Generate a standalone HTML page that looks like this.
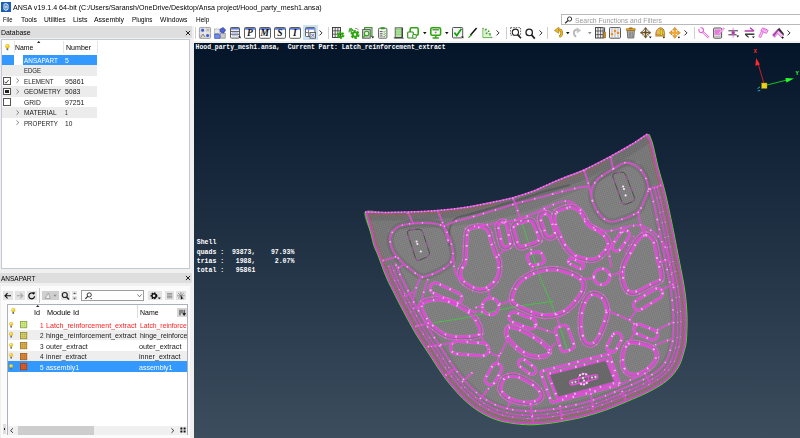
<!DOCTYPE html>
<html><head><meta charset="utf-8"><title>ANSA</title>
<style>
html,body{margin:0;padding:0;}
body{width:800px;height:438px;overflow:hidden;position:relative;background:#f0f0f0;font-family:"Liberation Sans",sans-serif;}
.r{position:absolute;display:block;}
.t{position:absolute;white-space:pre;line-height:normal;transform-origin:0 0;}
svg{overflow:visible}
</style></head><body>
<div class="r" style="left:0px;top:0px;width:800px;height:26px;background:#fff;"></div>
<svg class="r" style="left:1px;top:1.5px" width="10" height="10" viewBox="0 0 10 10"><rect width="10" height="10" fill="#1a5fb4"/><path d="M3 2.2 L5 1.6 L7 2.6 L7 7.2 L5 8.4 L3 7.4Z" fill="none" stroke="#fff" stroke-width="0.9"/><path d="M5 2.5V7.5M3.6 5H6.4" stroke="#fff" stroke-width="0.8"/></svg>
<span class="t" style="left:12.80px;top:2.83px;font-size:7.7px;color:#000;transform:scaleX(0.9215);">ANSA v19.1.4 64-bit (C:/Users/Saransh/OneDrive/Desktop/Ansa project/Hood_party_mesh1.ansa)</span>
<span class="t" style="left:3.40px;top:15.04px;font-size:7.8px;color:#000;transform:scaleX(0.7479);">File</span>
<span class="t" style="left:21.00px;top:15.04px;font-size:7.8px;color:#000;transform:scaleX(0.8787);">Tools</span>
<span class="t" style="left:44.00px;top:15.04px;font-size:7.8px;color:#000;transform:scaleX(0.8553);">Utilities</span>
<span class="t" style="left:72.50px;top:15.04px;font-size:7.8px;color:#000;transform:scaleX(0.9041);">Lists</span>
<span class="t" style="left:94.00px;top:15.04px;font-size:7.8px;color:#000;transform:scaleX(0.8873);">Assembly</span>
<span class="t" style="left:132.00px;top:15.04px;font-size:7.8px;color:#000;transform:scaleX(0.8013);">Plugins</span>
<span class="t" style="left:160.00px;top:15.04px;font-size:7.8px;color:#000;transform:scaleX(0.8691);">Windows</span>
<span class="t" style="left:195.50px;top:15.04px;font-size:7.8px;color:#000;transform:scaleX(0.8291);">Help</span>
<div class="r" style="left:561px;top:14px;width:239px;height:10.600000000000001px;background:#fff;border:1px solid #b9b9b9;border-right:none;box-sizing:border-box;"></div>
<svg class="r" style="left:564px;top:15.5px" width="9" height="8" viewBox="0 0 9 8"><circle cx="5.6" cy="3" r="2.1" fill="none" stroke="#333" stroke-width="1"/><path d="M4 4.6L1.2 7.2" stroke="#333" stroke-width="1.3"/></svg>
<span class="t" style="left:575.00px;top:15.72px;font-size:7.6px;color:#9a9a9a;transform:scaleX(0.8994);">Search Functions and Filters</span>
<div class="r" style="left:0px;top:26px;width:800px;height:14.5px;background:#fff;"></div>
<div class="r" style="left:0px;top:40.5px;width:800px;height:2.5px;background:#f0f0f0;"></div>
<div class="r" style="left:0px;top:26px;width:193.5px;height:412px;background:#f0f0f0;"></div>
<div class="r" style="left:0px;top:25.5px;width:192px;height:12.100000000000001px;background:#dedede;"></div>
<span class="t" style="left:1.30px;top:27.72px;font-size:7.6px;color:#000;transform:scaleX(0.9129);">Database</span>
<svg class="r" style="left:184.5px;top:29.5px" width="6" height="6" viewBox="0 0 6 6"><path d="M0.9 0.9L5.1 5.1M5.1 0.9L0.9 5.1" stroke="#222" stroke-width="1"/></svg>
<div class="r" style="left:1.2px;top:38.8px;width:188.60000000000002px;height:229.8px;background:#fff;border:1px solid #c3c9d2;box-sizing:border-box;"></div>
<svg class="r" style="left:5.10px;top:43.64px" width="4.80" height="6.72" viewBox="0 0 6 8.4"><circle cx="3" cy="2.8" r="2.5" fill="#f7d21c" stroke="#c79a10" stroke-width="0.5"/><circle cx="2.3" cy="2" r="0.9" fill="#fff6b0"/><rect x="1.9" y="5.2" width="2.2" height="2.6" fill="#6b6b6b"/></svg>
<span class="t" style="left:15.40px;top:43.02px;font-size:7.6px;color:#000;transform:scaleX(0.9076);">Name</span>
<span class="t" style="left:65.70px;top:43.02px;font-size:7.6px;color:#000;transform:scaleX(0.9285);">Number</span>
<svg class="r" style="left:36.5px;top:40.6px" width="3.4" height="2" viewBox="0 0 3.4 2"><path d="M0 2L1.7 0L3.4 2Z" fill="#222"/></svg>
<div class="r" style="left:14px;top:41px;width:0.5px;height:12px;background:#e5e5e5;"></div>
<div class="r" style="left:63px;top:41px;width:0.5px;height:12px;background:#e5e5e5;"></div>
<div class="r" style="left:96.7px;top:41px;width:0.5px;height:12px;background:#e5e5e5;"></div>
<div class="r" style="left:1.7px;top:54.5px;width:95.1px;height:10.200000000000003px;background:#3399ff;"></div>
<div class="r" style="left:13.8px;top:54.5px;width:9.599999999999998px;height:10.200000000000003px;background:#fff;"></div>
<span class="t" style="left:24.40px;top:55.72px;font-size:7.6px;color:#fff;transform:scaleX(0.8419);">ANSAPART</span>
<span class="t" style="left:64.80px;top:55.72px;font-size:7.6px;color:#fff;transform:scaleX(0.8990);">5</span>
<div class="r" style="left:1.7px;top:65.0px;width:95.1px;height:10.5px;background:#ececec;"></div>
<span class="t" style="left:24.40px;top:66.22px;font-size:7.6px;color:#1a1a1a;transform:scaleX(0.7939);">EDGE</span>
<span class="t" style="left:24.40px;top:76.72px;font-size:7.6px;color:#1a1a1a;transform:scaleX(0.8246);">ELEMENT</span>
<span class="t" style="left:64.80px;top:76.72px;font-size:7.6px;color:#1a1a1a;transform:scaleX(0.9179);">95861</span>
<svg class="r" style="left:16.2px;top:78.15px" width="3.4" height="5.2" viewBox="0 0 3.4 5.2"><path d="M0.5 0.4L2.8 2.6L0.5 4.8" fill="none" stroke="#666" stroke-width="0.8"/></svg>
<div class="r" style="left:3.1px;top:77.35px;width:7.5px;height:7.5px;background:#fff;border:0.8px solid #555;box-sizing:border-box;"></div>
<svg class="r" style="left:3.25px;top:77.55px" width="7.2" height="7.2" viewBox="0 0 7.2 7.2"><path d="M1.6 3.7L3 5.2L5.7 1.9" fill="none" stroke="#333" stroke-width="0.9"/></svg>
<div class="r" style="left:1.7px;top:86.0px;width:95.1px;height:10.5px;background:#ececec;"></div>
<span class="t" style="left:24.40px;top:87.22px;font-size:7.6px;color:#1a1a1a;transform:scaleX(0.8511);">GEOMETRY</span>
<span class="t" style="left:64.80px;top:87.22px;font-size:7.6px;color:#1a1a1a;transform:scaleX(0.9167);">5083</span>
<svg class="r" style="left:16.2px;top:88.65px" width="3.4" height="5.2" viewBox="0 0 3.4 5.2"><path d="M0.5 0.4L2.8 2.6L0.5 4.8" fill="none" stroke="#666" stroke-width="0.8"/></svg>
<div class="r" style="left:3.1px;top:87.85px;width:7.5px;height:7.5px;background:#fff;border:0.8px solid #555;box-sizing:border-box;"></div>
<div class="r" style="left:5.1px;top:89.85px;width:3.5px;height:3.5px;background:#222;"></div>
<span class="t" style="left:24.40px;top:97.72px;font-size:7.6px;color:#1a1a1a;transform:scaleX(0.8842);">GRID</span>
<span class="t" style="left:64.80px;top:97.72px;font-size:7.6px;color:#1a1a1a;transform:scaleX(0.9179);">97251</span>
<div class="r" style="left:3.1px;top:98.35px;width:7.5px;height:7.5px;background:#fff;border:0.8px solid #555;box-sizing:border-box;"></div>
<div class="r" style="left:1.7px;top:107.0px;width:95.1px;height:10.5px;background:#ececec;"></div>
<span class="t" style="left:24.40px;top:108.22px;font-size:7.6px;color:#1a1a1a;transform:scaleX(0.8706);">MATERIAL</span>
<span class="t" style="left:65.30px;top:108.22px;font-size:7.6px;color:#1a1a1a;transform:scaleX(0.6388);">1</span>
<svg class="r" style="left:16.2px;top:109.65px" width="3.4" height="5.2" viewBox="0 0 3.4 5.2"><path d="M0.5 0.4L2.8 2.6L0.5 4.8" fill="none" stroke="#666" stroke-width="0.8"/></svg>
<span class="t" style="left:24.40px;top:118.72px;font-size:7.6px;color:#1a1a1a;transform:scaleX(0.8135);">PROPERTY</span>
<span class="t" style="left:65.30px;top:118.72px;font-size:7.6px;color:#1a1a1a;transform:scaleX(0.8635);">10</span>
<svg class="r" style="left:16.2px;top:120.15px" width="3.4" height="5.2" viewBox="0 0 3.4 5.2"><path d="M0.5 0.4L2.8 2.6L0.5 4.8" fill="none" stroke="#666" stroke-width="0.8"/></svg>
<div class="r" style="left:0px;top:272.5px;width:192px;height:10.899999999999977px;background:#dedede;"></div>
<span class="t" style="left:1.20px;top:273.92px;font-size:7.6px;color:#000;transform:scaleX(0.8543);">ANSAPART</span>
<svg class="r" style="left:184.5px;top:275.3px" width="6" height="6" viewBox="0 0 6 6"><path d="M0.9 0.9L5.1 5.1M5.1 0.9L0.9 5.1" stroke="#222" stroke-width="1"/></svg>
<div class="r" style="left:1.2px;top:285.6px;width:188.60000000000002px;height:152.39999999999998px;background:#fbfbfb;"></div>
<div class="r" style="left:3px;top:290.6px;width:9.8px;height:9.599999999999966px;background:#e3e3e3;"></div>
<div class="r" style="left:15.4px;top:290.6px;width:9.799999999999999px;height:9.599999999999966px;background:#e3e3e3;"></div>
<div class="r" style="left:27.2px;top:290.6px;width:9.8px;height:9.599999999999966px;background:#e3e3e3;"></div>
<svg class="r" style="left:3px;top:290.6px" width="9.8" height="9.6" viewBox="0 0 9.8 9.6"><path d="M8 4.8H2.2M4.6 2.2L2 4.8L4.6 7.4" fill="none" stroke="#111" stroke-width="1.1"/></svg>
<svg class="r" style="left:15.4px;top:290.6px" width="9.8" height="9.6" viewBox="0 0 9.8 9.6"><path d="M1.8 4.8H7.6M5.2 2.2L7.8 4.8L5.2 7.4" fill="none" stroke="#a8a8a8" stroke-width="1.1"/></svg>
<svg class="r" style="left:27.2px;top:290.6px" width="9.8" height="9.6" viewBox="0 0 9.8 9.6"><path d="M7.6 5.2A2.9 2.9 0 1 1 6.2 2.4" fill="none" stroke="#111" stroke-width="1.2"/><path d="M5.2 0.9L8.3 1.6L6.6 4Z" fill="#111"/></svg>
<div class="r" style="left:39.2px;top:288px;width:0.5px;height:15px;background:#c8c8c8;"></div>
<div class="r" style="left:42px;top:290.6px;width:16.5px;height:9.599999999999966px;background:#cfcfcf;"></div>
<svg class="r" style="left:42px;top:290.6px" width="16.5" height="9.6" viewBox="0 0 16.5 9.6"><path d="M3 7.5L6.5 2L8.3 7.5Z" fill="#efefef" stroke="#9a9a9a" stroke-width="0.8"/><path d="M11.3 3.8L13 5.8L14.7 3.8Z" fill="#8a8a8a"/></svg>
<div class="r" style="left:61.4px;top:290.6px;width:8.800000000000004px;height:9.599999999999966px;background:#e3e3e3;"></div>
<svg class="r" style="left:61.4px;top:290.6px" width="8.8" height="9.6" viewBox="0 0 8.8 9.6"><circle cx="3.8" cy="4" r="2.5" fill="none" stroke="#222" stroke-width="1.2"/><path d="M5.6 5.9L8 8.4" stroke="#222" stroke-width="1.4"/></svg>
<div class="r" style="left:71.8px;top:290.6px;width:5.200000000000003px;height:4.399999999999977px;background:#e3e3e3;"></div>
<div class="r" style="left:71.8px;top:295.8px;width:5.200000000000003px;height:4.399999999999977px;background:#e3e3e3;"></div>
<svg class="r" style="left:71.8px;top:290.6px" width="5.2" height="9.6" viewBox="0 0 5.2 9.6"><path d="M1.2 3L2.6 1.4L4 3Z M1.2 6.8L2.6 8.4L4 6.8Z" fill="#555"/></svg>
<div class="r" style="left:81px;top:289.6px;width:62.599999999999994px;height:11.399999999999977px;background:#fff;border:0.7px solid #9d9d9d;box-sizing:border-box;"></div>
<svg class="r" style="left:84px;top:291.5px" width="9" height="8" viewBox="0 0 9 8"><circle cx="5.2" cy="2.9" r="2.1" fill="none" stroke="#222" stroke-width="0.9"/><path d="M3.7 4.4L1.4 6.8" stroke="#222" stroke-width="1.1"/><rect x="6.6" y="6" width="1.1" height="1.1" fill="#222"/></svg>
<svg class="r" style="left:137px;top:293.6px" width="5" height="3.4" viewBox="0 0 5 3.4"><path d="M0.4 0.4L2.5 2.8L4.6 0.4" fill="none" stroke="#555" stroke-width="0.8"/></svg>
<div class="r" style="left:147.6px;top:290.6px;width:14.0px;height:9.599999999999966px;background:#e3e3e3;"></div>
<div class="r" style="left:164.7px;top:290.6px;width:9.300000000000011px;height:9.599999999999966px;background:#e3e3e3;"></div>
<div class="r" style="left:176.4px;top:290.6px;width:9.799999999999983px;height:9.599999999999966px;background:#e3e3e3;"></div>
<svg class="r" style="left:147.6px;top:290.6px" width="14" height="9.6" viewBox="0 0 14 9.6"><circle cx="6" cy="4.8" r="2.6" fill="none" stroke="#111" stroke-width="1.7" stroke-dasharray="1.5 0.9"/><circle cx="6" cy="4.8" r="2" fill="none" stroke="#111" stroke-width="1.2"/><path d="M9.8 6.5L11.3 8.2L12.8 6.5Z" fill="#111"/></svg>
<svg class="r" style="left:164.7px;top:290.6px" width="9.3" height="9.6" viewBox="0 0 9.3 9.6"><path d="M2 2.6H7.3M2 4H7.3M2 5.4H7.3M2 6.8H7.3" stroke="#8a8a8a" stroke-width="0.9"/></svg>
<svg class="r" style="left:176.4px;top:290.6px" width="9.8" height="9.6" viewBox="0 0 9.8 9.6"><path d="M4.9 1V8.6M1 4.8H8.8M2 2L7.8 7.6M7.8 2L2 7.6" stroke="#777" stroke-width="0.7"/><path d="M5 4.4L5 8.6L6.3 7.4L7.6 8.8Z" fill="#111"/></svg>
<div class="r" style="left:7px;top:304px;width:181px;height:131.39999999999998px;background:#fff;border:0.8px solid #a9b1bc;box-sizing:border-box;"></div>
<svg class="r" style="left:11.05px;top:308.05px" width="4.50" height="6.30" viewBox="0 0 6 8.4"><circle cx="3" cy="2.8" r="2.5" fill="#f7d21c" stroke="#c79a10" stroke-width="0.5"/><circle cx="2.3" cy="2" r="0.9" fill="#fff6b0"/><rect x="1.9" y="5.2" width="2.2" height="2.6" fill="#6b6b6b"/></svg>
<span class="t" style="left:34.00px;top:308.22px;font-size:7.6px;color:#000;transform:scaleX(0.9466);">Id</span>
<span class="t" style="left:46.80px;top:308.22px;font-size:7.6px;color:#000;transform:scaleX(0.9587);">Module Id</span>
<span class="t" style="left:140.00px;top:308.22px;font-size:7.6px;color:#000;transform:scaleX(0.9174);">Name</span>
<svg class="r" style="left:35.8px;top:305px" width="3.4" height="2" viewBox="0 0 3.4 2"><path d="M0 2L1.7 0L3.4 2Z" fill="#222"/></svg>
<div class="r" style="left:137.4px;top:305px;width:0.5px;height:13px;background:#ddd;"></div>
<div class="r" style="left:177px;top:307.6px;width:10.199999999999989px;height:9.0px;background:#d6d6d6;"></div>
<svg class="r" style="left:177px;top:307.6px" width="10.2" height="9" viewBox="0 0 10.2 9"><path d="M3 1.8V7.2M5 1.8V5.2M7.2 1.8V7M5.9 5.4L7.2 7.4L8.5 5.4Z" stroke="#222" stroke-width="0.9" fill="#222"/></svg>
<svg class="r" style="left:9.14px;top:321.53px" width="4.32" height="6.05" viewBox="0 0 6 8.4"><circle cx="3" cy="2.8" r="2.5" fill="#f7d21c" stroke="#c79a10" stroke-width="0.5"/><circle cx="2.3" cy="2" r="0.9" fill="#fff6b0"/><rect x="1.9" y="5.2" width="2.2" height="2.6" fill="#6b6b6b"/></svg>
<svg class="r" style="left:20px;top:321.05px" width="7.2" height="7.2" viewBox="0 0 7.2 7.2"><rect x="0.4" y="0.4" width="6.4" height="6.4" fill="#d8f08a" stroke="#7da23a" stroke-width="0.8"/><path d="M2.5 0.4V6.8M4.7 0.4V6.8M0.4 2.5H6.8M0.4 4.7H6.8" stroke="#7da23a" stroke-width="0.35" opacity="0.7"/></svg>
<span class="t" style="left:40.00px;top:320.52px;font-size:7.6px;color:#ff2020;transform:scaleX(0.8517);">1</span>
<span class="t" style="left:45.60px;top:320.52px;font-size:7.6px;color:#ff2020;transform:scaleX(0.9406);">Latch_reinforcement_extract</span>
<div class="r" style="left:138px;top:319.4px;width:49.3px;height:10.5px;overflow:hidden">
<span class="t" style="left:2.00px;top:1.12px;font-size:7.6px;color:#ff2020;transform:scaleX(0.8933);">Latch_reinforce</span>
</div>
<div class="r" style="left:7.6px;top:329.9px;width:179.70000000000002px;height:10.5px;background:#eeeeee;"></div>
<svg class="r" style="left:9.14px;top:332.03px" width="4.32" height="6.05" viewBox="0 0 6 8.4"><circle cx="3" cy="2.8" r="2.5" fill="#f7d21c" stroke="#c79a10" stroke-width="0.5"/><circle cx="2.3" cy="2" r="0.9" fill="#fff6b0"/><rect x="1.9" y="5.2" width="2.2" height="2.6" fill="#6b6b6b"/></svg>
<svg class="r" style="left:20px;top:331.55px" width="7.2" height="7.2" viewBox="0 0 7.2 7.2"><rect x="0.4" y="0.4" width="6.4" height="6.4" fill="#dcd46a" stroke="#8c8630" stroke-width="0.8"/><path d="M2.5 0.4V6.8M4.7 0.4V6.8M0.4 2.5H6.8M0.4 4.7H6.8" stroke="#8c8630" stroke-width="0.35" opacity="0.7"/></svg>
<span class="t" style="left:40.00px;top:331.02px;font-size:7.6px;color:#1a1a1a;transform:scaleX(0.8517);">2</span>
<span class="t" style="left:45.60px;top:331.02px;font-size:7.6px;color:#1a1a1a;transform:scaleX(0.9406);">hinge_reinforcement_extract</span>
<div class="r" style="left:138px;top:329.9px;width:49.3px;height:10.5px;overflow:hidden">
<span class="t" style="left:2.00px;top:1.12px;font-size:7.6px;color:#1a1a1a;transform:scaleX(0.9047);">hinge_reinforce</span>
</div>
<svg class="r" style="left:9.14px;top:342.53px" width="4.32" height="6.05" viewBox="0 0 6 8.4"><circle cx="3" cy="2.8" r="2.5" fill="#f7d21c" stroke="#c79a10" stroke-width="0.5"/><circle cx="2.3" cy="2" r="0.9" fill="#fff6b0"/><rect x="1.9" y="5.2" width="2.2" height="2.6" fill="#6b6b6b"/></svg>
<svg class="r" style="left:20px;top:342.05px" width="7.2" height="7.2" viewBox="0 0 7.2 7.2"><rect x="0.4" y="0.4" width="6.4" height="6.4" fill="#e0b050" stroke="#9a7424" stroke-width="0.8"/><path d="M2.5 0.4V6.8M4.7 0.4V6.8M0.4 2.5H6.8M0.4 4.7H6.8" stroke="#9a7424" stroke-width="0.35" opacity="0.7"/></svg>
<span class="t" style="left:40.00px;top:341.52px;font-size:7.6px;color:#1a1a1a;transform:scaleX(0.8517);">3</span>
<span class="t" style="left:46.20px;top:341.52px;font-size:7.6px;color:#1a1a1a;transform:scaleX(0.9423);">outer_extract</span>
<div class="r" style="left:138px;top:340.4px;width:49.3px;height:10.5px;overflow:hidden">
<span class="t" style="left:0.80px;top:1.12px;font-size:7.6px;color:#1a1a1a;transform:scaleX(0.9581);">outer_extract</span>
</div>
<div class="r" style="left:7.6px;top:350.9px;width:179.70000000000002px;height:10.5px;background:#eeeeee;"></div>
<svg class="r" style="left:9.14px;top:353.03px" width="4.32" height="6.05" viewBox="0 0 6 8.4"><circle cx="3" cy="2.8" r="2.5" fill="#f7d21c" stroke="#c79a10" stroke-width="0.5"/><circle cx="2.3" cy="2" r="0.9" fill="#fff6b0"/><rect x="1.9" y="5.2" width="2.2" height="2.6" fill="#6b6b6b"/></svg>
<svg class="r" style="left:20px;top:352.55px" width="7.2" height="7.2" viewBox="0 0 7.2 7.2"><rect x="0.4" y="0.4" width="6.4" height="6.4" fill="#e08a3a" stroke="#9a5a1e" stroke-width="0.8"/><path d="M2.5 0.4V6.8M4.7 0.4V6.8M0.4 2.5H6.8M0.4 4.7H6.8" stroke="#9a5a1e" stroke-width="0.35" opacity="0.7"/></svg>
<span class="t" style="left:40.00px;top:352.02px;font-size:7.6px;color:#1a1a1a;transform:scaleX(0.8517);">4</span>
<span class="t" style="left:46.20px;top:352.02px;font-size:7.6px;color:#1a1a1a;transform:scaleX(0.9286);">inner_extract</span>
<div class="r" style="left:138px;top:350.9px;width:49.3px;height:10.5px;overflow:hidden">
<span class="t" style="left:0.80px;top:1.12px;font-size:7.6px;color:#1a1a1a;transform:scaleX(0.9446);">inner_extract</span>
</div>
<div class="r" style="left:7.6px;top:361.09999999999997px;width:179.70000000000002px;height:10.5px;background:#3399ff;"></div>
<svg class="r" style="left:9.14px;top:363.53px" width="4.32" height="6.05" viewBox="0 0 6 8.4"><circle cx="3" cy="2.8" r="2.5" fill="#f7d21c" stroke="#c79a10" stroke-width="0.5"/><circle cx="2.3" cy="2" r="0.9" fill="#fff6b0"/><rect x="1.9" y="5.2" width="2.2" height="2.6" fill="#6b6b6b"/></svg>
<svg class="r" style="left:20px;top:363.05px" width="7.2" height="7.2" viewBox="0 0 7.2 7.2"><rect x="0.4" y="0.4" width="6.4" height="6.4" fill="#e0602a" stroke="#a03c14" stroke-width="0.8"/><path d="M2.5 0.4V6.8M4.7 0.4V6.8M0.4 2.5H6.8M0.4 4.7H6.8" stroke="#a03c14" stroke-width="0.35" opacity="0.7"/></svg>
<span class="t" style="left:40.00px;top:362.52px;font-size:7.6px;color:#fff;transform:scaleX(0.8517);">5</span>
<span class="t" style="left:46.20px;top:362.52px;font-size:7.6px;color:#fff;transform:scaleX(0.9112);">assembly1</span>
<div class="r" style="left:138px;top:361.4px;width:49.3px;height:10.5px;overflow:hidden">
<span class="t" style="left:0.80px;top:1.12px;font-size:7.6px;color:#fff;transform:scaleX(0.9222);">assembly1</span>
</div>
<div class="r" style="left:7.8px;top:426px;width:179.39999999999998px;height:8.699999999999989px;background:#f0f0f0;"></div>
<div class="r" style="left:17.7px;top:426px;width:76.1px;height:8.699999999999989px;background:#cdcdcd;"></div>
<svg class="r" style="left:10px;top:427.8px" width="3.4" height="5.2" viewBox="0 0 3.4 5.2"><path d="M2.9 0.4L0.6 2.6L2.9 4.8" fill="none" stroke="#222" stroke-width="0.9"/></svg>
<svg class="r" style="left:171.2px;top:427.8px" width="3.4" height="5.2" viewBox="0 0 3.4 5.2"><path d="M0.5 0.4L2.8 2.6L0.5 4.8" fill="none" stroke="#222" stroke-width="0.9"/></svg>
<svg class="r" style="left:179.8px;top:427.4px" width="6" height="6" viewBox="0 0 6 6"><path d="M0.4 0.4h2v2h-2zM3.6 0.4h2v2h-2zM0.4 3.6h2v2h-2zM3.6 3.6h2v2h-2z" fill="#111"/></svg>
<div class="r" style="left:2.5px;top:423.5px;width:3.4000000000000004px;height:10.899999999999977px;background:#dddddd;"></div>
<div class="r" style="left:3.5px;top:428.2px;width:1.2999999999999998px;height:1.400000000000034px;background:#222;"></div>
<div class="r" style="left:195px;top:27px;width:0.6999999999999886px;height:12px;background:#cfcfcf;"></div>
<svg class="r" style="left:199px;top:26.7px" width="12" height="11.8" viewBox="0 0 12 11.8"><rect x="0.4" y="0.4" width="11.2" height="11" rx="1" fill="#d9d9d9" stroke="#8d8d8d" stroke-width="0.8"/><path d="M0.6 6H11.4M6 0.6V11.2" stroke="#fff" stroke-width="0.8" stroke-dasharray="1.2 0.8"/><path d="M1.5 10.5L4 7.2L6 10" stroke="#555" stroke-width="0.7" fill="none"/><circle cx="3.6" cy="3.2" r="1.5" fill="#3b5bd6"/><circle cx="8.6" cy="8.4" r="1.5" fill="#3b5bd6"/><path d="M7.4 2L10 4M10 2L7.4 4" stroke="#999" stroke-width="0.6"/></svg>
<svg class="r" style="left:214.2px;top:26.7px" width="12" height="11.8" viewBox="0 0 12 11.8"><rect x="0.4" y="2" width="5" height="4.5" fill="#e8e8e8" stroke="#9a9a9a" stroke-width="0.6"/><rect x="6.2" y="6.6" width="5" height="4.6" fill="#c9c9c9" stroke="#7a7a7a" stroke-width="0.6"/><path d="M0.6 7h4.2l1 1v3.4h-5.2z" fill="#6f8cf0" stroke="#2a3e9c" stroke-width="0.6"/><path d="M6 2.2L9.2 0.5L11.6 3L9.8 6L6.6 5.2Z" fill="#4a63d8" stroke="#1f2f86" stroke-width="0.6"/></svg>
<svg class="r" style="left:230.2px;top:26.7px" width="11" height="11.8" viewBox="0 0 11 11.8"><rect x="0.5" y="0.5" width="9" height="10.6" rx="0.8" fill="#fff" stroke="#444" stroke-width="0.9"/><rect x="1" y="1" width="8" height="1.6" fill="#5a7be0"/><path d="M1 4.4H9M1 7.2H9" stroke="#444" stroke-width="0.9"/><path d="M2 5.8H8M2 8.8H8" stroke="#9fb2ee" stroke-width="1"/><path d="M8 9.4h2.6v2.2z" fill="#111"/></svg>
<svg class="r" style="left:244px;top:26.7px" width="12" height="11.8" viewBox="0 0 12 11.8"><rect x="0.5" y="0.5" width="11" height="10.8" rx="1" fill="#fff" stroke="#5a5a5a" stroke-width="1"/><rect x="1" y="1" width="10" height="1.7" fill="#5a7be0"/></svg>
<span class="t" style="left:246.90px;top:28.14px;font-size:9.5px;color:#111;transform:scaleX(1.0000);font-family:'Liberation Serif',serif;font-weight:bold;font-style:italic;">P</span>
<svg class="r" style="left:259px;top:26.7px" width="12" height="11.8" viewBox="0 0 12 11.8"><rect x="0.5" y="0.5" width="11" height="10.8" rx="1" fill="#fff" stroke="#5a5a5a" stroke-width="1"/><rect x="1" y="1" width="10" height="1.7" fill="#5a7be0"/></svg>
<span class="t" style="left:260.58px;top:28.14px;font-size:9.5px;color:#111;transform:scaleX(1.0000);font-family:'Liberation Serif',serif;font-weight:bold;font-style:italic;">M</span>
<svg class="r" style="left:274px;top:26.7px" width="12" height="11.8" viewBox="0 0 12 11.8"><rect x="0.5" y="0.5" width="11" height="10.8" rx="1" fill="#fff" stroke="#5a5a5a" stroke-width="1"/><rect x="1" y="1" width="10" height="1.7" fill="#5a7be0"/></svg>
<span class="t" style="left:277.16px;top:28.14px;font-size:9.5px;color:#111;transform:scaleX(1.0000);font-family:'Liberation Serif',serif;font-weight:bold;font-style:italic;">S</span>
<svg class="r" style="left:289px;top:26.7px" width="12" height="11.8" viewBox="0 0 12 11.8"><rect x="0.5" y="0.5" width="11" height="10.8" rx="1" fill="#fff" stroke="#5a5a5a" stroke-width="1"/><rect x="1" y="1" width="10" height="1.7" fill="#5a7be0"/></svg>
<span class="t" style="left:292.95px;top:28.14px;font-size:9.5px;color:#111;transform:scaleX(1.0000);font-family:'Liberation Serif',serif;font-weight:bold;font-style:italic;">I</span>
<div class="r" style="left:302.5px;top:25.2px;width:15.300000000000011px;height:14.400000000000002px;background:#cde4f7;"></div>
<svg class="r" style="left:304.6px;top:27.2px" width="11" height="11.8" viewBox="0 0 11 11.8"><rect x="0.5" y="0.5" width="9.4" height="9" rx="0.8" fill="#fff" stroke="#555" stroke-width="0.9"/><rect x="1" y="1" width="8.4" height="1.6" fill="#5a7be0"/><path d="M3.6 2.6V9.4M1 5.6H3.6" stroke="#555" stroke-width="0.8"/><rect x="5" y="5.6" width="5.6" height="5.6" fill="#e8e8e8" stroke="#444" stroke-width="0.8"/><path d="M6.4 7L9.2 9.8M9.2 7L6.4 9.8" stroke="#4a63d8" stroke-width="0.8"/></svg>
<svg class="r" style="left:318.8px;top:30.2px" width="3.6" height="5.8" viewBox="0 0 3.6 5.8"><path d="M0.5 0.4L3 2.9L0.5 5.4" fill="none" stroke="#222" stroke-width="0.95"/></svg>
<div class="r" style="left:328.2px;top:27px;width:0.6999999999999886px;height:12px;background:#cfcfcf;"></div>
<svg class="r" style="left:332px;top:26.7px" width="12" height="11.8" viewBox="0 0 12 11.8"><rect x="0.5" y="0.5" width="8" height="10" fill="#ededed" stroke="#333" stroke-width="0.9"/><path d="M0.5 3.8H8.5M0.5 7.2H8.5M3.2 0.5V10.5M5.9 0.5V10.5" stroke="#333" stroke-width="0.7"/><circle cx="8.6" cy="8.2" r="2.6" fill="none" stroke="#2ea60f" stroke-width="2.47" stroke-dasharray="1.61 1.09"/><circle cx="8.6" cy="8.2" r="1.87" fill="none" stroke="#2ea60f" stroke-width="1.61"/></svg>
<svg class="r" style="left:348px;top:26.7px" width="12" height="11.8" viewBox="0 0 12 11.8"><path d="M1 5.5A3.5 3.5 0 0 1 4 1.5" fill="none" stroke="#999" stroke-width="1.2"/><path d="M7 1.3A3.5 3.5 0 0 1 10.6 3.4" fill="none" stroke="#999" stroke-width="1"/><circle cx="3" cy="3" r="1.5" fill="none" stroke="#2ea60f" stroke-width="1.42" stroke-dasharray="0.93 0.63"/><circle cx="3" cy="3" r="1.08" fill="none" stroke="#2ea60f" stroke-width="0.93"/><circle cx="7" cy="7.5" r="3.1" fill="none" stroke="#2ea60f" stroke-width="2.94" stroke-dasharray="1.92 1.30"/><circle cx="7" cy="7.5" r="2.23" fill="none" stroke="#2ea60f" stroke-width="1.92"/></svg>
<svg class="r" style="left:362px;top:26.7px" width="12.5" height="11.8" viewBox="0 0 12.5 11.8"><rect x="2.6" y="0.6" width="7.4" height="8.6" fill="#dcdcdc" stroke="#2d8a14" stroke-width="1"/><rect x="0.6" y="2.6" width="7.6" height="8.6" fill="#cfcfcf" stroke="#555" stroke-width="0.9"/><circle cx="4.6" cy="6.6" r="2.3" fill="#e9f6e2" stroke="#2ea60f" stroke-width="1.1"/><path d="M3 8.4L1.2 10.6" stroke="#2ea60f" stroke-width="1.2"/><path d="M9.4 9.6h2.8l-1.4 2z" fill="#111"/></svg>
<svg class="r" style="left:378.4px;top:26.7px" width="10" height="11.8" viewBox="0 0 10 11.8"><rect x="0.5" y="1.2" width="8.4" height="10" rx="0.9" fill="#f3f3f3" stroke="#555" stroke-width="0.9"/><rect x="2.6" y="0.2" width="4.2" height="2" rx="0.6" fill="#2d9a14"/><path d="M1.8 4.6H4.6M1.8 6.8H4.6M1.8 9H4.6" stroke="#444" stroke-width="0.9"/><path d="M5.4 4.6l0.8 0.8l1.5-1.7M5.4 6.9l0.8 0.8l1.5-1.7M5.4 9.1l0.8 0.8l1.5-1.7" stroke="#2ea60f" stroke-width="0.8" fill="none"/></svg>
<svg class="r" style="left:392.8px;top:26.7px" width="11.5" height="11.8" viewBox="0 0 11.5 11.8"><rect x="2.2" y="0.8" width="7" height="9.6" fill="#bfe7b0" stroke="#555" stroke-width="0.9"/><path d="M3 2.5H8.4M3 4.2H8.4M3 5.9H8.4M3 7.6H8.4" stroke="#7fcf6a" stroke-width="0.8"/><path d="M0.4 10.4H10L11 11.4H1.4Z" fill="#222"/><path d="M9.2 0.8V10.4" stroke="#222" stroke-width="1"/></svg>
<svg class="r" style="left:407px;top:26.7px" width="12" height="11.8" viewBox="0 0 12 11.8"><rect x="3.2" y="0.8" width="8" height="7.4" rx="1.4" fill="#fff" stroke="#2ea60f" stroke-width="1.6"/><rect x="0.7" y="5" width="5.6" height="6" rx="0.8" fill="#fff" stroke="#2d8a14" stroke-width="1.1"/><rect x="5.8" y="7.6" width="3.4" height="3.6" rx="0.6" fill="#fff" stroke="#2d8a14" stroke-width="1"/></svg>
<svg class="r" style="left:422.5px;top:32px" width="3.6" height="2.2" viewBox="0 0 3.6 2.2"><path d="M0 0H3.6L1.8 2.2Z" fill="#111"/></svg>
<svg class="r" style="left:429.6px;top:26.7px" width="11.4" height="11.8" viewBox="0 0 11.4 11.8"><rect x="0.8" y="0.8" width="9.8" height="7.4" rx="1.4" fill="#fff" stroke="#2ea60f" stroke-width="1.6"/><rect x="2.4" y="2.2" width="6.6" height="1.2" fill="#2d8a14"/><circle cx="5.7" cy="5.4" r="1" fill="#888"/><path d="M2.6 11h6.2M5.7 8.6V11" stroke="#2ea60f" stroke-width="1.6"/></svg>
<svg class="r" style="left:444.6px;top:32px" width="3.6" height="2.2" viewBox="0 0 3.6 2.2"><path d="M0 0H3.6L1.8 2.2Z" fill="#111"/></svg>
<svg class="r" style="left:452px;top:26.7px" width="11.6" height="11.8" viewBox="0 0 11.6 11.8"><rect x="0.5" y="0.5" width="10.2" height="10.4" rx="0.8" fill="#f4f4f4" stroke="#555" stroke-width="1"/><path d="M2.4 5.6L4.8 8.6L9.4 1.8" fill="none" stroke="#17a010" stroke-width="1.7"/><path d="M9 9.6h2.4v2z" fill="#111"/></svg>
<svg class="r" style="left:467px;top:26.7px" width="10.5" height="11.8" viewBox="0 0 10.5 11.8"><path d="M9.6 1L3.4 8.2" stroke="#111" stroke-width="1.5"/><path d="M4.2 7L1 10.4L2 11L5 8.2Z" fill="#2ea60f"/></svg>
<svg class="r" style="left:481.5px;top:26.7px" width="10.5" height="11.8" viewBox="0 0 10.5 11.8"><path d="M1 0.8V10.6H10.2" fill="none" stroke="#2ea60f" stroke-width="0.9"/><path d="M1 1.4L9.8 10.4" stroke="#444" stroke-width="0.9" stroke-dasharray="1.4 0.9"/><path d="M1.4 10.2L9.6 10.2L1.4 1.8Z" fill="#d8f0cf" opacity="0.8"/><circle cx="4" cy="2.4" r="0.9" fill="#2ea60f"/><circle cx="6.6" cy="4.2" r="0.9" fill="#2ea60f"/><circle cx="8" cy="7" r="0.9" fill="#2ea60f"/><circle cx="4.4" cy="6.4" r="0.8" fill="#2ea60f"/></svg>
<svg class="r" style="left:496px;top:30.2px" width="3.6" height="5.8" viewBox="0 0 3.6 5.8"><path d="M0.5 0.4L3 2.9L0.5 5.4" fill="none" stroke="#222" stroke-width="0.95"/></svg>
<div class="r" style="left:505.6px;top:27px;width:0.6999999999999886px;height:12px;background:#cfcfcf;"></div>
<svg class="r" style="left:509.6px;top:26.7px" width="12" height="11.8" viewBox="0 0 12 11.8"><rect x="0.6" y="0.6" width="10" height="7.6" fill="none" stroke="#555" stroke-width="0.9" stroke-dasharray="1.5 1.1"/><circle cx="5.4" cy="5.2" r="3.1" fill="#fff" stroke="#222" stroke-width="1.1"/><path d="M7.6 7.6L11 11.2" stroke="#222" stroke-width="1.6"/></svg>
<svg class="r" style="left:525.2px;top:27.6px" width="10.6" height="11.8" viewBox="0 0 10.6 11.8"><circle cx="4.2" cy="4.4" r="3.2" fill="#fff" stroke="#222" stroke-width="1.3"/><path d="M6.5 6.9L9.8 10.6" stroke="#222" stroke-width="1.7"/></svg>
<svg class="r" style="left:539px;top:30.2px" width="3.6" height="5.8" viewBox="0 0 3.6 5.8"><path d="M0.5 0.4L3 2.9L0.5 5.4" fill="none" stroke="#222" stroke-width="0.95"/></svg>
<div class="r" style="left:546.6px;top:27px;width:0.7000000000000455px;height:12px;background:#cfcfcf;"></div>
<svg class="r" style="left:553.6px;top:27.4px" width="8.6" height="11.8" viewBox="0 0 8.6 11.8"><path d="M4.6 2.8C8.6 2.6 8.6 8 5.4 9.8" fill="none" stroke="#8a6a10" stroke-width="2.4"/><path d="M4.6 2.8C8.6 2.6 8.6 8 5.4 9.8" fill="none" stroke="#f0b51c" stroke-width="1.5"/><path d="M0.4 3.6L4.8 0.2V6.4Z" fill="#f0b51c" stroke="#8a6a10" stroke-width="0.5"/></svg>
<svg class="r" style="left:565.6px;top:32.2px" width="3.6" height="2.2" viewBox="0 0 3.6 2.2"><path d="M0 0H3.6L1.8 2.2Z" fill="#111"/></svg>
<svg class="r" style="left:572.6px;top:27.4px" width="8.6" height="11.8" viewBox="0 0 8.6 11.8"><path d="M4 2.8C0 2.6 0 8 3.2 9.8" fill="none" stroke="#b9b9b9" stroke-width="1.9"/><path d="M8.2 3.6L3.8 0.2V6.4Z" fill="#c4c4c4"/></svg>
<svg class="r" style="left:588px;top:32.2px" width="3.6" height="2.2" viewBox="0 0 3.6 2.2"><path d="M0 0H3.6L1.8 2.2Z" fill="#8a8a8a"/></svg>
<svg class="r" style="left:595.2px;top:26.7px" width="11" height="11.8" viewBox="0 0 11 11.8"><rect x="0.5" y="0.6" width="7.6" height="10.4" fill="#f1f1f1" stroke="#333" stroke-width="0.9"/><path d="M0.5 4H8.1M0.5 7.6H8.1M3 0.6V11M5.6 0.6V11" stroke="#333" stroke-width="0.7"/><path d="M9.6 0.4V5" stroke="#333" stroke-width="0.9"/><rect x="8.7" y="5" width="1.9" height="6" fill="#c98a1a" stroke="#6a4708" stroke-width="0.4"/></svg>
<svg class="r" style="left:609px;top:26.7px" width="12" height="11.8" viewBox="0 0 12 11.8"><rect x="0.5" y="0.6" width="11" height="10.6" rx="0.8" fill="#f3f3f3" stroke="#555" stroke-width="1"/><path d="M3 1.6V10.2M6 1.6V10.2M9 1.6V10.2" stroke="#999" stroke-width="0.7"/><rect x="1.8" y="6.2" width="2.4" height="1.9" fill="#f08a1c"/><rect x="4.8" y="3" width="2.4" height="1.9" fill="#f08a1c"/><rect x="7.8" y="5" width="2.4" height="1.9" fill="#f08a1c"/></svg>
<svg class="r" style="left:625.8px;top:27.2px" width="9.6" height="11.8" viewBox="0 0 9.6 11.8"><path d="M1.2 3.6H8.4L7.8 11H1.8Z" fill="#b9b9b9" stroke="#555" stroke-width="0.8"/><path d="M3.3 4.6V10M4.8 4.6V10M6.3 4.6V10" stroke="#6a6a6a" stroke-width="0.7"/><rect x="0.3" y="1.6" width="9" height="1.9" rx="0.5" fill="#e8a21c" stroke="#8a5a08" stroke-width="0.5"/><rect x="3.2" y="0.5" width="3.2" height="1.2" fill="#8a5a08"/></svg>
<svg class="r" style="left:639.6px;top:26.7px" width="12" height="11.8" viewBox="0 0 12 11.8"><path d="M5.6 0.2L7.4 2.6H3.8ZM5.6 11.2L7.4 8.8H3.8ZM0.2 5.7L2.6 3.9V7.5ZM11 5.7L8.6 3.9V7.5Z" fill="#7a5a1e" stroke="#4a3208" stroke-width="0.4"/><path d="M5.6 2.6V8.8M2.6 5.7H8.6" stroke="#6a4a12" stroke-width="1.2"/><path d="M2.8 2.9L4.6 4.7M8.4 2.9L6.6 4.7M2.8 8.5L4.6 6.7M8.4 8.5L6.6 6.7" stroke="#555" stroke-width="0.9"/><path d="M9 9.6h2.6l-1.3 1.8z" fill="#111"/></svg>
<svg class="r" style="left:655.2px;top:27px" width="10.6" height="11.8" viewBox="0 0 10.6 11.8"><path d="M0.8 8C0.6 2.6 4 0.8 5.6 0.8C8.6 0.8 9.6 4 9.6 8Z" fill="#f0b45a" stroke="#8a5a12" stroke-width="0.7"/><rect x="5.4" y="2.6" width="1.8" height="5.6" fill="#d8e020" stroke="#7a8a10" stroke-width="0.4"/><path d="M0.4 8.2H10V9.6H0.4Z" fill="#c88a2a"/><path d="M7.6 9.8h2.6l-1.3 1.8z" fill="#111"/></svg>
<svg class="r" style="left:669px;top:26.7px" width="12" height="11.8" viewBox="0 0 12 11.8"><path d="M5.8 0.2L8 3H3.6ZM5.8 11.4L8 8.6H3.6ZM0.2 5.8L3 3.6V8ZM11.4 5.8L8.6 3.6V8Z" fill="#f0a83a" stroke="#a8701a" stroke-width="0.5"/><rect x="4.7" y="2.6" width="2.2" height="6.4" fill="#f0a83a"/><rect x="2.6" y="4.7" width="6.4" height="2.2" fill="#f0a83a"/><path d="M8.6 9.8h2.6l-1.3 1.8z" fill="#111"/></svg>
<svg class="r" style="left:684px;top:30.2px" width="3.6" height="5.8" viewBox="0 0 3.6 5.8"><path d="M0.5 0.4L3 2.9L0.5 5.4" fill="none" stroke="#222" stroke-width="0.95"/></svg>
<div class="r" style="left:694.4px;top:27px;width:0.7000000000000455px;height:12px;background:#cfcfcf;"></div>
<svg class="r" style="left:697.8px;top:26.7px" width="12" height="11.8" viewBox="0 0 12 11.8"><path d="M3.4 3.8L10.8 10.6" stroke="#e268d8" stroke-width="2.2"/><path d="M3.4 3.8L10.8 10.6" stroke="#fff" stroke-width="0.9"/><circle cx="3.2" cy="3.2" r="2.3" fill="#fff" stroke="#e268d8" stroke-width="1.2"/><path d="M1.4 0.8L3.4 3.2" stroke="#fff" stroke-width="1.6"/></svg>
<svg class="r" style="left:712.8px;top:26.7px" width="12" height="11.8" viewBox="0 0 12 11.8"><rect x="0.6" y="1" width="8" height="10.2" rx="1" fill="#ececec" stroke="#555" stroke-width="1"/><rect x="1.6" y="2.4" width="6" height="5.4" fill="#e268d8" opacity="0.85"/><path d="M1.4 9.2H7.8" stroke="#999" stroke-width="0.8"/><path d="M5 6.2L10.6 0.8L11.6 1.8L6.2 7.2Z" fill="#f3c2f0" stroke="#e268d8" stroke-width="0.6"/></svg>
<svg class="r" style="left:728.2px;top:26.7px" width="11.6" height="11.8" viewBox="0 0 11.6 11.8"><path d="M0.4 3.8H10M0.4 7.8H8.6" stroke="#333" stroke-width="1"/><path d="M5.2 0.2L6.8 2.4H3.6ZM5.2 11.6L6.8 9.4H3.6Z" fill="#f3c2f0"/><path d="M5.2 2.4V9.4" stroke="#e268d8" stroke-width="1"/><circle cx="5.2" cy="5.8" r="1.7" fill="#b03ab0"/><path d="M8.4 8.6h2.8l-1.4 1.9z" fill="#111"/></svg>
<svg class="r" style="left:744px;top:26.7px" width="11.4" height="11.8" viewBox="0 0 11.4 11.8"><path d="M0.6 4H9.6" stroke="#b03ab0" stroke-width="1.5"/><path d="M6 0.8L10 4" stroke="#b03ab0" stroke-width="1.3"/><path d="M1.2 7.2H10.4" stroke="#333" stroke-width="1.5"/><path d="M1.2 7.2L4.6 10.4" stroke="#333" stroke-width="1.3"/><path d="M8 9.4h2.8l-1.4 1.9z" fill="#111"/></svg>
<svg class="r" style="left:758.4px;top:26.7px" width="11" height="11.8" viewBox="0 0 11 11.8"><path d="M4.6 0.8L10.2 3.4L8.4 6.4L2.8 3.8Z" fill="#f3c2f0" stroke="#e268d8" stroke-width="0.9"/><path d="M5.4 4.6L2.8 10.6L0.8 9.6L3.6 3.8Z" fill="#f3c2f0" stroke="#e268d8" stroke-width="0.9"/><path d="M5 2.2L8.6 4M6 1.4L9.6 3.2" stroke="#e268d8" stroke-width="0.5"/></svg>
<svg class="r" style="left:772.4px;top:26.7px" width="12.2" height="11.8" viewBox="0 0 12.2 11.8"><path d="M0.6 8L5.6 2.4L11.6 8.4L9.4 10.4L5.6 6.4L2.6 10.4Z" fill="#f3c2f0" stroke="#b03ab0" stroke-width="0.6"/><path d="M0.6 8L5.6 2.4L6.6 3.6L2 9.6Z" fill="#b03ab0"/><path d="M5.6 2.4L7.2 0.8L11.8 6.6L11.6 8.4Z" fill="#333"/><path d="M9.2 10h2.8l-1.4 1.9z" fill="#111"/></svg>
<svg class="r" style="left:787.4px;top:30.2px" width="3.6" height="5.8" viewBox="0 0 3.6 5.8"><path d="M0.5 0.4L3 2.9L0.5 5.4" fill="none" stroke="#222" stroke-width="0.95"/></svg>
<div class="r" style="left:193.8px;top:43px;width:606.2px;height:395px;background:linear-gradient(#04152a,#3c4d5e);"></div>
<span class="t" style="left:195.60px;top:43.95px;font-size:6.42px;color:#fff;transform:scaleX(1.0000);font-family:'Liberation Mono',monospace;font-weight:bold;">Hood_party_mesh1.ansa,  Current Part: Latch_reinforcement_extract</span>
<span class="t" style="left:196.80px;top:239.49px;font-size:6.5px;color:#fff;transform:scaleX(1.0000);font-family:'Liberation Mono',monospace;font-weight:bold;">Shell</span>
<span class="t" style="left:196.80px;top:248.69px;font-size:6.5px;color:#fff;transform:scaleX(1.0000);font-family:'Liberation Mono',monospace;font-weight:bold;">quads :  93873,    97.93%</span>
<span class="t" style="left:196.80px;top:257.89px;font-size:6.5px;color:#fff;transform:scaleX(1.0000);font-family:'Liberation Mono',monospace;font-weight:bold;">trias :   1988,     2.07%</span>
<span class="t" style="left:196.80px;top:267.09px;font-size:6.5px;color:#fff;transform:scaleX(1.0000);font-family:'Liberation Mono',monospace;font-weight:bold;">total :   95861</span>
<svg class="r" style="left:0;top:0" width="800" height="438" viewBox="0 0 800 438">
<defs>
<pattern id="mesh" width="2" height="2" patternUnits="userSpaceOnUse" patternTransform="rotate(-16)"><rect width="2" height="2" fill="#8b8b8b"/><path d="M0 0.5H2M0.5 0V2" stroke="#747474" stroke-width="0.6"/></pattern>
<filter id="bl" x="-2%" y="-2%" width="104%" height="104%"><feGaussianBlur stdDeviation="0.45"/></filter>
<clipPath id="hc"><path d="M365.0 212.0C367.5 208.4 378.8 212.4 386.0 212.4C393.2 212.4 399.3 212.3 408.0 212.0C416.7 211.7 428.0 211.2 438.0 210.4C448.0 209.6 458.3 208.5 468.0 207.0C477.7 205.5 488.5 203.2 496.0 201.6C503.5 200.0 506.8 199.4 513.0 197.7C519.2 196.0 526.8 193.6 533.0 191.3C539.2 189.0 544.5 186.1 550.0 183.7C555.5 181.3 560.3 179.3 566.0 177.0C571.7 174.7 576.6 173.4 584.0 170.0C591.4 166.6 602.8 160.6 610.6 156.4C618.4 152.2 624.6 148.7 630.7 145.0C636.9 141.3 644.0 134.6 647.5 134.0C651.0 133.4 650.2 135.9 652.0 141.5C653.8 147.1 656.4 160.4 658.3 167.7C660.2 175.0 661.8 179.9 663.3 185.3C664.8 190.8 665.4 192.9 667.1 200.4C668.8 207.9 671.3 220.2 673.4 230.5C675.5 240.8 677.6 252.1 679.5 262.0C681.4 271.9 683.5 281.2 684.7 290.0C686.0 298.8 686.7 306.7 687.0 315.0C687.3 323.3 686.9 334.0 686.4 340.0C685.9 346.0 685.5 346.7 684.2 351.2C682.9 355.7 681.4 361.9 678.6 366.8C675.8 371.7 672.2 376.2 667.4 380.3C662.5 384.4 656.2 388.0 649.5 391.5C642.8 395.0 634.6 398.3 627.1 401.5C619.6 404.7 612.2 407.9 604.7 410.5C597.2 413.1 589.9 415.3 582.4 417.2C574.9 419.1 566.2 420.6 560.0 421.7C553.8 422.8 550.8 423.3 545.0 423.8C539.2 424.3 532.9 425.2 525.5 424.7C518.1 424.2 507.9 423.1 500.4 421.0C492.9 418.9 486.6 416.0 480.3 412.2C474.0 408.4 468.6 404.0 462.7 398.4C456.8 392.8 450.6 385.4 445.1 378.3C439.7 371.2 435.0 363.2 430.0 355.6C425.0 348.0 420.2 341.2 415.2 332.8C410.2 324.4 403.9 312.2 400.1 305.1C396.4 298.1 394.8 294.7 392.7 290.5C390.6 286.3 389.2 283.8 387.5 280.0C385.8 276.2 384.2 272.1 382.6 267.9C381.0 263.7 379.3 258.6 377.8 254.8C376.3 251.0 374.9 248.7 373.8 245.3C372.7 241.9 372.5 239.8 371.0 234.2C369.5 228.6 362.5 215.6 365.0 212.0Z"/></clipPath>
</defs>
<g filter="url(#bl)">
<path d="M365.0 212.0C367.5 208.4 378.8 212.4 386.0 212.4C393.2 212.4 399.3 212.3 408.0 212.0C416.7 211.7 428.0 211.2 438.0 210.4C448.0 209.6 458.3 208.5 468.0 207.0C477.7 205.5 488.5 203.2 496.0 201.6C503.5 200.0 506.8 199.4 513.0 197.7C519.2 196.0 526.8 193.6 533.0 191.3C539.2 189.0 544.5 186.1 550.0 183.7C555.5 181.3 560.3 179.3 566.0 177.0C571.7 174.7 576.6 173.4 584.0 170.0C591.4 166.6 602.8 160.6 610.6 156.4C618.4 152.2 624.6 148.7 630.7 145.0C636.9 141.3 644.0 134.6 647.5 134.0C651.0 133.4 650.2 135.9 652.0 141.5C653.8 147.1 656.4 160.4 658.3 167.7C660.2 175.0 661.8 179.9 663.3 185.3C664.8 190.8 665.4 192.9 667.1 200.4C668.8 207.9 671.3 220.2 673.4 230.5C675.5 240.8 677.6 252.1 679.5 262.0C681.4 271.9 683.5 281.2 684.7 290.0C686.0 298.8 686.7 306.7 687.0 315.0C687.3 323.3 686.9 334.0 686.4 340.0C685.9 346.0 685.5 346.7 684.2 351.2C682.9 355.7 681.4 361.9 678.6 366.8C675.8 371.7 672.2 376.2 667.4 380.3C662.5 384.4 656.2 388.0 649.5 391.5C642.8 395.0 634.6 398.3 627.1 401.5C619.6 404.7 612.2 407.9 604.7 410.5C597.2 413.1 589.9 415.3 582.4 417.2C574.9 419.1 566.2 420.6 560.0 421.7C553.8 422.8 550.8 423.3 545.0 423.8C539.2 424.3 532.9 425.2 525.5 424.7C518.1 424.2 507.9 423.1 500.4 421.0C492.9 418.9 486.6 416.0 480.3 412.2C474.0 408.4 468.6 404.0 462.7 398.4C456.8 392.8 450.6 385.4 445.1 378.3C439.7 371.2 435.0 363.2 430.0 355.6C425.0 348.0 420.2 341.2 415.2 332.8C410.2 324.4 403.9 312.2 400.1 305.1C396.4 298.1 394.8 294.7 392.7 290.5C390.6 286.3 389.2 283.8 387.5 280.0C385.8 276.2 384.2 272.1 382.6 267.9C381.0 263.7 379.3 258.6 377.8 254.8C376.3 251.0 374.9 248.7 373.8 245.3C372.7 241.9 372.5 239.8 371.0 234.2C369.5 228.6 362.5 215.6 365.0 212.0Z" fill="url(#mesh)"/>
<g clip-path="url(#hc)">
<path d="M449.5 246.0C449.5 243.3 448.6 234.5 449.5 230.0C450.4 225.5 451.9 221.5 455.0 219.0C458.1 216.5 462.7 216.4 468.0 214.8C473.3 213.2 480.8 211.1 487.0 209.3C493.2 207.5 499.5 205.4 505.0 203.8C510.5 202.2 513.3 201.7 520.0 199.6C526.7 197.5 536.7 193.6 545.0 191.2C553.3 188.8 565.8 186.0 570.0 185.0" fill="none" stroke="#3c3c3c" stroke-width="2" opacity="0.35" stroke-linejoin="round"/>
<path d="M365.0 212.0C367.5 208.4 378.8 212.4 386.0 212.4C393.2 212.4 399.3 212.3 408.0 212.0C416.7 211.7 428.0 211.2 438.0 210.4C448.0 209.6 458.3 208.5 468.0 207.0C477.7 205.5 488.5 203.2 496.0 201.6C503.5 200.0 506.8 199.4 513.0 197.7C519.2 196.0 526.8 193.6 533.0 191.3C539.2 189.0 544.5 186.1 550.0 183.7C555.5 181.3 560.3 179.3 566.0 177.0C571.7 174.7 576.6 173.4 584.0 170.0C591.4 166.6 602.8 160.6 610.6 156.4C618.4 152.2 624.6 148.7 630.7 145.0C636.9 141.3 644.0 134.6 647.5 134.0C651.0 133.4 650.2 135.9 652.0 141.5C653.8 147.1 656.4 160.4 658.3 167.7C660.2 175.0 661.8 179.9 663.3 185.3C664.8 190.8 665.4 192.9 667.1 200.4C668.8 207.9 671.3 220.2 673.4 230.5C675.5 240.8 677.6 252.1 679.5 262.0C681.4 271.9 683.5 281.2 684.7 290.0C686.0 298.8 686.7 306.7 687.0 315.0C687.3 323.3 686.9 334.0 686.4 340.0C685.9 346.0 685.5 346.7 684.2 351.2C682.9 355.7 681.4 361.9 678.6 366.8C675.8 371.7 672.2 376.2 667.4 380.3C662.5 384.4 656.2 388.0 649.5 391.5C642.8 395.0 634.6 398.3 627.1 401.5C619.6 404.7 612.2 407.9 604.7 410.5C597.2 413.1 589.9 415.3 582.4 417.2C574.9 419.1 566.2 420.6 560.0 421.7C553.8 422.8 550.8 423.3 545.0 423.8C539.2 424.3 532.9 425.2 525.5 424.7C518.1 424.2 507.9 423.1 500.4 421.0C492.9 418.9 486.6 416.0 480.3 412.2C474.0 408.4 468.6 404.0 462.7 398.4C456.8 392.8 450.6 385.4 445.1 378.3C439.7 371.2 435.0 363.2 430.0 355.6C425.0 348.0 420.2 341.2 415.2 332.8C410.2 324.4 403.9 312.2 400.1 305.1C396.4 298.1 394.8 294.7 392.7 290.5C390.6 286.3 389.2 283.8 387.5 280.0C385.8 276.2 384.2 272.1 382.6 267.9C381.0 263.7 379.3 258.6 377.8 254.8C376.3 251.0 374.9 248.7 373.8 245.3C372.7 241.9 372.5 239.8 371.0 234.2C369.5 228.6 362.5 215.6 365.0 212.0Z" fill="none" stroke="#3c3c3c" stroke-width="34" opacity="0.11" stroke-linejoin="round"/>
<path d="M409.0 223.9C414.6 223.1 424.8 222.7 430.4 223.1C436.0 223.5 439.8 224.0 442.9 226.4C446.0 228.8 447.5 233.3 449.2 237.7C450.9 242.1 452.8 248.6 453.0 252.8C453.2 257.0 452.6 259.9 450.5 262.8C448.4 265.7 445.0 268.1 440.4 270.4C435.8 272.7 427.8 276.9 422.8 276.7C417.8 276.5 414.1 271.8 410.3 269.1C406.5 266.4 403.1 263.4 400.2 260.3C397.3 257.2 394.4 254.1 392.7 250.3C391.0 246.5 389.6 241.5 390.2 237.7C390.8 233.9 393.4 230.0 396.5 227.7C399.6 225.4 403.4 224.7 409.0 223.9Z" fill="none" stroke="#3c3c3c" stroke-width="7" opacity="0.15" stroke-linejoin="round"/>
<path d="M613.1 169.0C617.7 166.3 621.6 163.1 625.6 162.7C629.6 162.3 633.8 164.4 636.9 166.5C640.0 168.6 642.6 171.5 644.5 175.3C646.4 179.1 648.4 184.5 648.2 189.1C648.0 193.7 644.9 199.1 643.2 202.9C641.5 206.7 641.1 209.2 638.2 211.7C635.3 214.2 630.2 216.3 625.6 218.0C621.0 219.7 614.8 222.1 610.6 221.7C606.4 221.3 603.4 218.6 600.5 215.5C597.6 212.4 594.5 207.1 593.0 202.9C591.5 198.7 590.9 194.3 591.7 190.3C592.5 186.3 594.4 182.6 598.0 179.0C601.6 175.4 608.5 171.7 613.1 169.0Z" fill="none" stroke="#3c3c3c" stroke-width="7" opacity="0.15" stroke-linejoin="round"/>
<path d="M365.0 216.0C372.2 216.0 395.8 216.2 408.0 216.0C420.2 215.8 428.0 215.3 438.0 214.5C448.0 213.7 458.3 212.4 468.0 211.0C477.7 209.6 488.5 207.5 496.0 206.0C503.5 204.5 506.8 203.7 513.0 202.0C519.2 200.3 526.8 198.2 533.0 196.0C539.2 193.8 544.5 190.8 550.0 188.5C555.5 186.2 560.3 184.2 566.0 182.0C571.7 179.8 576.6 178.5 584.0 175.0C591.4 171.5 602.8 165.2 610.6 161.0C618.4 156.8 624.6 153.7 630.7 150.0C636.9 146.3 644.7 140.8 647.5 139.0" fill="none" stroke="#3c3c3c" stroke-width="9" opacity="0.15" stroke-linejoin="round"/>
<path d="M468.0 231.0C469.2 228.9 471.8 228.3 474.3 227.7C476.8 227.1 480.7 226.8 483.0 227.5C485.3 228.2 486.6 229.0 488.0 231.6C489.4 234.2 489.9 239.1 491.1 242.8C492.3 246.5 493.9 250.8 495.1 254.0C496.3 257.2 497.9 258.3 498.3 262.0C498.7 265.7 499.0 272.0 497.5 276.0C496.0 280.0 492.4 283.7 489.5 285.9C486.6 288.1 483.1 289.1 479.9 289.1C476.7 289.1 473.3 287.5 470.4 285.9C467.5 284.3 464.0 281.9 462.4 279.5C460.8 277.1 460.3 274.4 460.8 271.5C461.3 268.6 464.7 265.4 465.6 262.0C466.5 258.6 466.2 254.5 466.4 250.8C466.6 247.1 466.7 243.3 467.0 240.0C467.3 236.7 466.8 233.1 468.0 231.0Z" fill="none" stroke="#dc5cd6" stroke-width="7.7" stroke-linejoin="round"/>
<path d="M468.0 231.0C469.2 228.9 471.8 228.3 474.3 227.7C476.8 227.1 480.7 226.8 483.0 227.5C485.3 228.2 486.6 229.0 488.0 231.6C489.4 234.2 489.9 239.1 491.1 242.8C492.3 246.5 493.9 250.8 495.1 254.0C496.3 257.2 497.9 258.3 498.3 262.0C498.7 265.7 499.0 272.0 497.5 276.0C496.0 280.0 492.4 283.7 489.5 285.9C486.6 288.1 483.1 289.1 479.9 289.1C476.7 289.1 473.3 287.5 470.4 285.9C467.5 284.3 464.0 281.9 462.4 279.5C460.8 277.1 460.3 274.4 460.8 271.5C461.3 268.6 464.7 265.4 465.6 262.0C466.5 258.6 466.2 254.5 466.4 250.8C466.6 247.1 466.7 243.3 467.0 240.0C467.3 236.7 466.8 233.1 468.0 231.0Z" fill="none" stroke="#f3b0ee" stroke-width="7.7" stroke-dasharray="1 9.2 1.2 13" opacity="0.5"/>
<path d="M468.0 231.0C469.2 228.9 471.8 228.3 474.3 227.7C476.8 227.1 480.7 226.8 483.0 227.5C485.3 228.2 486.6 229.0 488.0 231.6C489.4 234.2 489.9 239.1 491.1 242.8C492.3 246.5 493.9 250.8 495.1 254.0C496.3 257.2 497.9 258.3 498.3 262.0C498.7 265.7 499.0 272.0 497.5 276.0C496.0 280.0 492.4 283.7 489.5 285.9C486.6 288.1 483.1 289.1 479.9 289.1C476.7 289.1 473.3 287.5 470.4 285.9C467.5 284.3 464.0 281.9 462.4 279.5C460.8 277.1 460.3 274.4 460.8 271.5C461.3 268.6 464.7 265.4 465.6 262.0C466.5 258.6 466.2 254.5 466.4 250.8C466.6 247.1 466.7 243.3 467.0 240.0C467.3 236.7 466.8 233.1 468.0 231.0Z" fill="none" stroke="#757575" stroke-width="5.3" stroke-linejoin="round"/>
<path d="M498.3 227.4L501.8 243.5A4.3 4.3 0 0 0 510.2 241.7L506.7 225.6A4.3 4.3 0 0 0 498.3 227.4Z" fill="none" stroke="#dc5cd6" stroke-width="7.9" stroke-linejoin="round"/>
<path d="M498.3 227.4L501.8 243.5A4.3 4.3 0 0 0 510.2 241.7L506.7 225.6A4.3 4.3 0 0 0 498.3 227.4Z" fill="none" stroke="#f3b0ee" stroke-width="7.9" stroke-dasharray="1 9.2 1.2 13" opacity="0.5"/>
<path d="M498.3 227.4L501.8 243.5A4.3 4.3 0 0 0 510.2 241.7L506.7 225.6A4.3 4.3 0 0 0 498.3 227.4Z" fill="none" stroke="#757575" stroke-width="5.5" stroke-linejoin="round"/>
<path d="M516.9 224.2L527.2 221.1Q531.5 219.8 533.3 223.9L538.7 236.4Q540.5 240.5 536.2 241.9L523.3 246.2Q519.0 247.6 517.7 243.3L513.9 229.8Q512.6 225.5 516.9 224.2Z" fill="none" stroke="#dc5cd6" stroke-width="7.9" stroke-linejoin="round"/>
<path d="M516.9 224.2L527.2 221.1Q531.5 219.8 533.3 223.9L538.7 236.4Q540.5 240.5 536.2 241.9L523.3 246.2Q519.0 247.6 517.7 243.3L513.9 229.8Q512.6 225.5 516.9 224.2Z" fill="none" stroke="#f3b0ee" stroke-width="7.9" stroke-dasharray="1 9.2 1.2 13" opacity="0.5"/>
<path d="M516.9 224.2L527.2 221.1Q531.5 219.8 533.3 223.9L538.7 236.4Q540.5 240.5 536.2 241.9L523.3 246.2Q519.0 247.6 517.7 243.3L513.9 229.8Q512.6 225.5 516.9 224.2Z" fill="none" stroke="#757575" stroke-width="5.5" stroke-linejoin="round"/>
<path d="M540.7 219.6L545.8 234.1A4.8 4.8 0 0 0 554.8 230.9L549.7 216.4A4.8 4.8 0 0 0 540.7 219.6Z" fill="none" stroke="#dc5cd6" stroke-width="7.9" stroke-linejoin="round"/>
<path d="M540.7 219.6L545.8 234.1A4.8 4.8 0 0 0 554.8 230.9L549.7 216.4A4.8 4.8 0 0 0 540.7 219.6Z" fill="none" stroke="#f3b0ee" stroke-width="7.9" stroke-dasharray="1 9.2 1.2 13" opacity="0.5"/>
<path d="M540.7 219.6L545.8 234.1A4.8 4.8 0 0 0 554.8 230.9L549.7 216.4A4.8 4.8 0 0 0 540.7 219.6Z" fill="none" stroke="#757575" stroke-width="5.5" stroke-linejoin="round"/>
<path d="M556.5 212.6C559.0 210.1 566.4 207.6 570.4 207.6C574.4 207.6 577.5 209.7 580.4 212.6C583.3 215.5 584.5 221.8 587.9 225.2C591.2 228.5 597.1 229.8 600.5 232.7C603.9 235.6 607.6 239.3 608.0 242.7C608.4 246.0 605.5 250.1 603.0 252.8C600.5 255.5 597.6 258.7 593.0 259.1C588.4 259.5 580.0 257.6 575.4 255.3C570.8 253.0 567.8 248.7 565.3 245.3C562.8 242.0 562.0 239.0 560.3 235.2C558.6 231.4 555.9 226.4 555.3 222.6C554.7 218.8 554.0 215.1 556.5 212.6Z" fill="none" stroke="#dc5cd6" stroke-width="7.7" stroke-linejoin="round"/>
<path d="M556.5 212.6C559.0 210.1 566.4 207.6 570.4 207.6C574.4 207.6 577.5 209.7 580.4 212.6C583.3 215.5 584.5 221.8 587.9 225.2C591.2 228.5 597.1 229.8 600.5 232.7C603.9 235.6 607.6 239.3 608.0 242.7C608.4 246.0 605.5 250.1 603.0 252.8C600.5 255.5 597.6 258.7 593.0 259.1C588.4 259.5 580.0 257.6 575.4 255.3C570.8 253.0 567.8 248.7 565.3 245.3C562.8 242.0 562.0 239.0 560.3 235.2C558.6 231.4 555.9 226.4 555.3 222.6C554.7 218.8 554.0 215.1 556.5 212.6Z" fill="none" stroke="#f3b0ee" stroke-width="7.7" stroke-dasharray="1 9.2 1.2 13" opacity="0.5"/>
<path d="M556.5 212.6C559.0 210.1 566.4 207.6 570.4 207.6C574.4 207.6 577.5 209.7 580.4 212.6C583.3 215.5 584.5 221.8 587.9 225.2C591.2 228.5 597.1 229.8 600.5 232.7C603.9 235.6 607.6 239.3 608.0 242.7C608.4 246.0 605.5 250.1 603.0 252.8C600.5 255.5 597.6 258.7 593.0 259.1C588.4 259.5 580.0 257.6 575.4 255.3C570.8 253.0 567.8 248.7 565.3 245.3C562.8 242.0 562.0 239.0 560.3 235.2C558.6 231.4 555.9 226.4 555.3 222.6C554.7 218.8 554.0 215.1 556.5 212.6Z" fill="none" stroke="#757575" stroke-width="5.3" stroke-linejoin="round"/>
<path d="M645.7 235.2C648.2 235.4 651.4 237.7 653.3 241.5C655.2 245.3 655.8 251.7 657.0 257.8C658.2 263.9 661.8 273.5 660.8 277.9C659.8 282.3 655.0 281.9 650.8 284.2C646.6 286.5 639.5 290.6 635.7 291.7C631.9 292.8 630.2 292.8 628.1 290.5C626.0 288.2 623.7 282.1 623.1 277.9C622.5 273.7 623.1 269.5 624.4 265.3C625.7 261.1 628.4 257.0 630.7 252.8C633.0 248.6 635.7 243.1 638.2 240.2C640.7 237.3 643.2 235.0 645.7 235.2Z" fill="none" stroke="#dc5cd6" stroke-width="7.7" stroke-linejoin="round"/>
<path d="M645.7 235.2C648.2 235.4 651.4 237.7 653.3 241.5C655.2 245.3 655.8 251.7 657.0 257.8C658.2 263.9 661.8 273.5 660.8 277.9C659.8 282.3 655.0 281.9 650.8 284.2C646.6 286.5 639.5 290.6 635.7 291.7C631.9 292.8 630.2 292.8 628.1 290.5C626.0 288.2 623.7 282.1 623.1 277.9C622.5 273.7 623.1 269.5 624.4 265.3C625.7 261.1 628.4 257.0 630.7 252.8C633.0 248.6 635.7 243.1 638.2 240.2C640.7 237.3 643.2 235.0 645.7 235.2Z" fill="none" stroke="#f3b0ee" stroke-width="7.7" stroke-dasharray="1 9.2 1.2 13" opacity="0.5"/>
<path d="M645.7 235.2C648.2 235.4 651.4 237.7 653.3 241.5C655.2 245.3 655.8 251.7 657.0 257.8C658.2 263.9 661.8 273.5 660.8 277.9C659.8 282.3 655.0 281.9 650.8 284.2C646.6 286.5 639.5 290.6 635.7 291.7C631.9 292.8 630.2 292.8 628.1 290.5C626.0 288.2 623.7 282.1 623.1 277.9C622.5 273.7 623.1 269.5 624.4 265.3C625.7 261.1 628.4 257.0 630.7 252.8C633.0 248.6 635.7 243.1 638.2 240.2C640.7 237.3 643.2 235.0 645.7 235.2Z" fill="none" stroke="#757575" stroke-width="5.3" stroke-linejoin="round"/>
<path d="M512.7 300.3C511.9 296.5 514.8 289.4 517.7 285.2C520.6 281.0 525.8 277.6 530.3 275.2C534.8 272.8 540.4 271.4 545.0 270.6C549.6 269.8 552.5 269.0 558.0 270.2C563.5 271.4 573.8 275.0 578.0 277.7C582.2 280.4 583.4 282.7 583.0 286.5C582.6 290.3 578.9 296.1 575.5 300.3C572.1 304.5 568.4 309.2 562.9 311.6C557.4 314.0 549.5 315.5 542.8 314.9C536.1 314.3 527.7 310.2 522.7 307.8C517.7 305.4 513.5 304.1 512.7 300.3Z" fill="none" stroke="#dc5cd6" stroke-width="7.7" stroke-linejoin="round"/>
<path d="M512.7 300.3C511.9 296.5 514.8 289.4 517.7 285.2C520.6 281.0 525.8 277.6 530.3 275.2C534.8 272.8 540.4 271.4 545.0 270.6C549.6 269.8 552.5 269.0 558.0 270.2C563.5 271.4 573.8 275.0 578.0 277.7C582.2 280.4 583.4 282.7 583.0 286.5C582.6 290.3 578.9 296.1 575.5 300.3C572.1 304.5 568.4 309.2 562.9 311.6C557.4 314.0 549.5 315.5 542.8 314.9C536.1 314.3 527.7 310.2 522.7 307.8C517.7 305.4 513.5 304.1 512.7 300.3Z" fill="none" stroke="#f3b0ee" stroke-width="7.7" stroke-dasharray="1 9.2 1.2 13" opacity="0.5"/>
<path d="M512.7 300.3C511.9 296.5 514.8 289.4 517.7 285.2C520.6 281.0 525.8 277.6 530.3 275.2C534.8 272.8 540.4 271.4 545.0 270.6C549.6 269.8 552.5 269.0 558.0 270.2C563.5 271.4 573.8 275.0 578.0 277.7C582.2 280.4 583.4 282.7 583.0 286.5C582.6 290.3 578.9 296.1 575.5 300.3C572.1 304.5 568.4 309.2 562.9 311.6C557.4 314.0 549.5 315.5 542.8 314.9C536.1 314.3 527.7 310.2 522.7 307.8C517.7 305.4 513.5 304.1 512.7 300.3Z" fill="none" stroke="#757575" stroke-width="5.3" stroke-linejoin="round"/>
<path d="M422.7 303.9C425.4 301.0 435.7 299.1 442.8 300.1C449.9 301.2 459.9 306.9 465.4 310.2C470.8 313.5 473.2 316.2 475.5 320.2C477.8 324.2 481.4 331.3 479.3 334.0C477.2 336.7 468.1 336.3 462.9 336.5C457.6 336.7 452.4 336.8 447.8 335.3C443.2 333.8 438.9 330.6 435.3 327.7C431.8 324.8 428.6 321.7 426.5 317.7C424.4 313.7 420.0 306.8 422.7 303.9Z" fill="none" stroke="#dc5cd6" stroke-width="7.7" stroke-linejoin="round"/>
<path d="M422.7 303.9C425.4 301.0 435.7 299.1 442.8 300.1C449.9 301.2 459.9 306.9 465.4 310.2C470.8 313.5 473.2 316.2 475.5 320.2C477.8 324.2 481.4 331.3 479.3 334.0C477.2 336.7 468.1 336.3 462.9 336.5C457.6 336.7 452.4 336.8 447.8 335.3C443.2 333.8 438.9 330.6 435.3 327.7C431.8 324.8 428.6 321.7 426.5 317.7C424.4 313.7 420.0 306.8 422.7 303.9Z" fill="none" stroke="#f3b0ee" stroke-width="7.7" stroke-dasharray="1 9.2 1.2 13" opacity="0.5"/>
<path d="M422.7 303.9C425.4 301.0 435.7 299.1 442.8 300.1C449.9 301.2 459.9 306.9 465.4 310.2C470.8 313.5 473.2 316.2 475.5 320.2C477.8 324.2 481.4 331.3 479.3 334.0C477.2 336.7 468.1 336.3 462.9 336.5C457.6 336.7 452.4 336.8 447.8 335.3C443.2 333.8 438.9 330.6 435.3 327.7C431.8 324.8 428.6 321.7 426.5 317.7C424.4 313.7 420.0 306.8 422.7 303.9Z" fill="none" stroke="#757575" stroke-width="5.3" stroke-linejoin="round"/>
<path d="M508.8 327.7C510.9 326.9 515.3 328.1 520.1 330.2C524.9 332.3 532.9 336.9 537.7 340.3C542.5 343.7 548.2 347.7 549.0 350.3C549.8 352.9 546.3 355.2 542.7 355.8C539.1 356.4 532.2 355.9 527.6 354.1C523.0 352.4 518.5 348.5 515.1 345.3C511.8 342.1 508.6 338.1 507.5 335.2C506.4 332.3 506.7 328.5 508.8 327.7Z" fill="none" stroke="#dc5cd6" stroke-width="6.5" stroke-linejoin="round"/>
<path d="M508.8 327.7C510.9 326.9 515.3 328.1 520.1 330.2C524.9 332.3 532.9 336.9 537.7 340.3C542.5 343.7 548.2 347.7 549.0 350.3C549.8 352.9 546.3 355.2 542.7 355.8C539.1 356.4 532.2 355.9 527.6 354.1C523.0 352.4 518.5 348.5 515.1 345.3C511.8 342.1 508.6 338.1 507.5 335.2C506.4 332.3 506.7 328.5 508.8 327.7Z" fill="none" stroke="#f3b0ee" stroke-width="6.5" stroke-dasharray="1 9.2 1.2 13" opacity="0.5"/>
<path d="M508.8 327.7C510.9 326.9 515.3 328.1 520.1 330.2C524.9 332.3 532.9 336.9 537.7 340.3C542.5 343.7 548.2 347.7 549.0 350.3C549.8 352.9 546.3 355.2 542.7 355.8C539.1 356.4 532.2 355.9 527.6 354.1C523.0 352.4 518.5 348.5 515.1 345.3C511.8 342.1 508.6 338.1 507.5 335.2C506.4 332.3 506.7 328.5 508.8 327.7Z" fill="none" stroke="#757575" stroke-width="4.1" stroke-linejoin="round"/>
<path d="M591.0 295.0C593.0 294.1 595.8 294.5 598.0 295.5C600.2 296.5 602.6 298.2 604.0 301.0C605.4 303.8 606.8 307.5 606.5 312.0C606.2 316.5 603.8 323.3 602.0 328.0C600.2 332.7 597.9 337.3 596.0 340.0C594.1 342.7 592.5 344.0 590.6 344.0C588.7 344.0 586.0 342.7 584.5 340.0C583.0 337.3 581.9 332.5 581.5 328.0C581.1 323.5 581.2 317.5 582.0 313.0C582.8 308.5 584.5 304.0 586.0 301.0C587.5 298.0 589.0 295.9 591.0 295.0Z" fill="none" stroke="#dc5cd6" stroke-width="7.7" stroke-linejoin="round"/>
<path d="M591.0 295.0C593.0 294.1 595.8 294.5 598.0 295.5C600.2 296.5 602.6 298.2 604.0 301.0C605.4 303.8 606.8 307.5 606.5 312.0C606.2 316.5 603.8 323.3 602.0 328.0C600.2 332.7 597.9 337.3 596.0 340.0C594.1 342.7 592.5 344.0 590.6 344.0C588.7 344.0 586.0 342.7 584.5 340.0C583.0 337.3 581.9 332.5 581.5 328.0C581.1 323.5 581.2 317.5 582.0 313.0C582.8 308.5 584.5 304.0 586.0 301.0C587.5 298.0 589.0 295.9 591.0 295.0Z" fill="none" stroke="#f3b0ee" stroke-width="7.7" stroke-dasharray="1 9.2 1.2 13" opacity="0.5"/>
<path d="M591.0 295.0C593.0 294.1 595.8 294.5 598.0 295.5C600.2 296.5 602.6 298.2 604.0 301.0C605.4 303.8 606.8 307.5 606.5 312.0C606.2 316.5 603.8 323.3 602.0 328.0C600.2 332.7 597.9 337.3 596.0 340.0C594.1 342.7 592.5 344.0 590.6 344.0C588.7 344.0 586.0 342.7 584.5 340.0C583.0 337.3 581.9 332.5 581.5 328.0C581.1 323.5 581.2 317.5 582.0 313.0C582.8 308.5 584.5 304.0 586.0 301.0C587.5 298.0 589.0 295.9 591.0 295.0Z" fill="none" stroke="#757575" stroke-width="5.3" stroke-linejoin="round"/>
<path d="M628.1 344.0C631.0 341.7 636.5 343.2 640.7 344.0C644.9 344.8 650.8 346.7 653.3 349.0C655.8 351.3 656.6 354.7 655.8 357.8C654.9 360.9 651.6 365.2 648.2 367.9C644.9 370.6 639.5 373.8 635.7 374.2C631.9 374.6 627.7 373.1 625.6 370.4C623.5 367.7 622.7 362.2 623.1 357.8C623.5 353.4 625.2 346.3 628.1 344.0Z" fill="none" stroke="#dc5cd6" stroke-width="6.7" stroke-linejoin="round"/>
<path d="M628.1 344.0C631.0 341.7 636.5 343.2 640.7 344.0C644.9 344.8 650.8 346.7 653.3 349.0C655.8 351.3 656.6 354.7 655.8 357.8C654.9 360.9 651.6 365.2 648.2 367.9C644.9 370.6 639.5 373.8 635.7 374.2C631.9 374.6 627.7 373.1 625.6 370.4C623.5 367.7 622.7 362.2 623.1 357.8C623.5 353.4 625.2 346.3 628.1 344.0Z" fill="none" stroke="#f3b0ee" stroke-width="6.7" stroke-dasharray="1 9.2 1.2 13" opacity="0.5"/>
<path d="M628.1 344.0C631.0 341.7 636.5 343.2 640.7 344.0C644.9 344.8 650.8 346.7 653.3 349.0C655.8 351.3 656.6 354.7 655.8 357.8C654.9 360.9 651.6 365.2 648.2 367.9C644.9 370.6 639.5 373.8 635.7 374.2C631.9 374.6 627.7 373.1 625.6 370.4C623.5 367.7 622.7 362.2 623.1 357.8C623.5 353.4 625.2 346.3 628.1 344.0Z" fill="none" stroke="#757575" stroke-width="4.3" stroke-linejoin="round"/>
<path d="M507.9 377.0C510.4 376.4 513.3 375.3 517.9 377.0C522.5 378.7 531.7 383.6 535.5 387.0C539.3 390.4 541.4 394.6 540.6 397.1C539.8 399.6 535.1 401.7 530.5 402.1C525.9 402.5 517.7 401.5 512.9 399.6C508.1 397.7 503.3 393.9 501.6 390.8C499.9 387.7 501.8 383.1 502.9 380.8C503.9 378.5 505.4 377.6 507.9 377.0Z" fill="none" stroke="#dc5cd6" stroke-width="7.7" stroke-linejoin="round"/>
<path d="M507.9 377.0C510.4 376.4 513.3 375.3 517.9 377.0C522.5 378.7 531.7 383.6 535.5 387.0C539.3 390.4 541.4 394.6 540.6 397.1C539.8 399.6 535.1 401.7 530.5 402.1C525.9 402.5 517.7 401.5 512.9 399.6C508.1 397.7 503.3 393.9 501.6 390.8C499.9 387.7 501.8 383.1 502.9 380.8C503.9 378.5 505.4 377.6 507.9 377.0Z" fill="none" stroke="#f3b0ee" stroke-width="7.7" stroke-dasharray="1 9.2 1.2 13" opacity="0.5"/>
<path d="M507.9 377.0C510.4 376.4 513.3 375.3 517.9 377.0C522.5 378.7 531.7 383.6 535.5 387.0C539.3 390.4 541.4 394.6 540.6 397.1C539.8 399.6 535.1 401.7 530.5 402.1C525.9 402.5 517.7 401.5 512.9 399.6C508.1 397.7 503.3 393.9 501.6 390.8C499.9 387.7 501.8 383.1 502.9 380.8C503.9 378.5 505.4 377.6 507.9 377.0Z" fill="none" stroke="#757575" stroke-width="5.3" stroke-linejoin="round"/>
<path d="M468.0 231.0C469.2 228.9 471.8 228.3 474.3 227.7C476.8 227.1 480.7 226.8 483.0 227.5C485.3 228.2 486.6 229.0 488.0 231.6C489.4 234.2 489.9 239.1 491.1 242.8C492.3 246.5 493.9 250.8 495.1 254.0C496.3 257.2 497.9 258.3 498.3 262.0C498.7 265.7 499.0 272.0 497.5 276.0C496.0 280.0 492.4 283.7 489.5 285.9C486.6 288.1 483.1 289.1 479.9 289.1C476.7 289.1 473.3 287.5 470.4 285.9C467.5 284.3 464.0 281.9 462.4 279.5C460.8 277.1 460.3 274.4 460.8 271.5C461.3 268.6 464.7 265.4 465.6 262.0C466.5 258.6 466.2 254.5 466.4 250.8C466.6 247.1 466.7 243.3 467.0 240.0C467.3 236.7 466.8 233.1 468.0 231.0Z" fill="url(#mesh)"/>
<path d="M498.3 227.4L501.8 243.5A4.3 4.3 0 0 0 510.2 241.7L506.7 225.6A4.3 4.3 0 0 0 498.3 227.4Z" fill="url(#mesh)"/>
<path d="M516.9 224.2L527.2 221.1Q531.5 219.8 533.3 223.9L538.7 236.4Q540.5 240.5 536.2 241.9L523.3 246.2Q519.0 247.6 517.7 243.3L513.9 229.8Q512.6 225.5 516.9 224.2Z" fill="url(#mesh)"/>
<path d="M540.7 219.6L545.8 234.1A4.8 4.8 0 0 0 554.8 230.9L549.7 216.4A4.8 4.8 0 0 0 540.7 219.6Z" fill="url(#mesh)"/>
<path d="M556.5 212.6C559.0 210.1 566.4 207.6 570.4 207.6C574.4 207.6 577.5 209.7 580.4 212.6C583.3 215.5 584.5 221.8 587.9 225.2C591.2 228.5 597.1 229.8 600.5 232.7C603.9 235.6 607.6 239.3 608.0 242.7C608.4 246.0 605.5 250.1 603.0 252.8C600.5 255.5 597.6 258.7 593.0 259.1C588.4 259.5 580.0 257.6 575.4 255.3C570.8 253.0 567.8 248.7 565.3 245.3C562.8 242.0 562.0 239.0 560.3 235.2C558.6 231.4 555.9 226.4 555.3 222.6C554.7 218.8 554.0 215.1 556.5 212.6Z" fill="url(#mesh)"/>
<path d="M645.7 235.2C648.2 235.4 651.4 237.7 653.3 241.5C655.2 245.3 655.8 251.7 657.0 257.8C658.2 263.9 661.8 273.5 660.8 277.9C659.8 282.3 655.0 281.9 650.8 284.2C646.6 286.5 639.5 290.6 635.7 291.7C631.9 292.8 630.2 292.8 628.1 290.5C626.0 288.2 623.7 282.1 623.1 277.9C622.5 273.7 623.1 269.5 624.4 265.3C625.7 261.1 628.4 257.0 630.7 252.8C633.0 248.6 635.7 243.1 638.2 240.2C640.7 237.3 643.2 235.0 645.7 235.2Z" fill="url(#mesh)"/>
<path d="M512.7 300.3C511.9 296.5 514.8 289.4 517.7 285.2C520.6 281.0 525.8 277.6 530.3 275.2C534.8 272.8 540.4 271.4 545.0 270.6C549.6 269.8 552.5 269.0 558.0 270.2C563.5 271.4 573.8 275.0 578.0 277.7C582.2 280.4 583.4 282.7 583.0 286.5C582.6 290.3 578.9 296.1 575.5 300.3C572.1 304.5 568.4 309.2 562.9 311.6C557.4 314.0 549.5 315.5 542.8 314.9C536.1 314.3 527.7 310.2 522.7 307.8C517.7 305.4 513.5 304.1 512.7 300.3Z" fill="url(#mesh)"/>
<path d="M422.7 303.9C425.4 301.0 435.7 299.1 442.8 300.1C449.9 301.2 459.9 306.9 465.4 310.2C470.8 313.5 473.2 316.2 475.5 320.2C477.8 324.2 481.4 331.3 479.3 334.0C477.2 336.7 468.1 336.3 462.9 336.5C457.6 336.7 452.4 336.8 447.8 335.3C443.2 333.8 438.9 330.6 435.3 327.7C431.8 324.8 428.6 321.7 426.5 317.7C424.4 313.7 420.0 306.8 422.7 303.9Z" fill="url(#mesh)"/>
<path d="M508.8 327.7C510.9 326.9 515.3 328.1 520.1 330.2C524.9 332.3 532.9 336.9 537.7 340.3C542.5 343.7 548.2 347.7 549.0 350.3C549.8 352.9 546.3 355.2 542.7 355.8C539.1 356.4 532.2 355.9 527.6 354.1C523.0 352.4 518.5 348.5 515.1 345.3C511.8 342.1 508.6 338.1 507.5 335.2C506.4 332.3 506.7 328.5 508.8 327.7Z" fill="url(#mesh)"/>
<path d="M591.0 295.0C593.0 294.1 595.8 294.5 598.0 295.5C600.2 296.5 602.6 298.2 604.0 301.0C605.4 303.8 606.8 307.5 606.5 312.0C606.2 316.5 603.8 323.3 602.0 328.0C600.2 332.7 597.9 337.3 596.0 340.0C594.1 342.7 592.5 344.0 590.6 344.0C588.7 344.0 586.0 342.7 584.5 340.0C583.0 337.3 581.9 332.5 581.5 328.0C581.1 323.5 581.2 317.5 582.0 313.0C582.8 308.5 584.5 304.0 586.0 301.0C587.5 298.0 589.0 295.9 591.0 295.0Z" fill="url(#mesh)"/>
<path d="M628.1 344.0C631.0 341.7 636.5 343.2 640.7 344.0C644.9 344.8 650.8 346.7 653.3 349.0C655.8 351.3 656.6 354.7 655.8 357.8C654.9 360.9 651.6 365.2 648.2 367.9C644.9 370.6 639.5 373.8 635.7 374.2C631.9 374.6 627.7 373.1 625.6 370.4C623.5 367.7 622.7 362.2 623.1 357.8C623.5 353.4 625.2 346.3 628.1 344.0Z" fill="url(#mesh)"/>
<path d="M507.9 377.0C510.4 376.4 513.3 375.3 517.9 377.0C522.5 378.7 531.7 383.6 535.5 387.0C539.3 390.4 541.4 394.6 540.6 397.1C539.8 399.6 535.1 401.7 530.5 402.1C525.9 402.5 517.7 401.5 512.9 399.6C508.1 397.7 503.3 393.9 501.6 390.8C499.9 387.7 501.8 383.1 502.9 380.8C503.9 378.5 505.4 377.6 507.9 377.0Z" fill="url(#mesh)"/>
<path d="M549.5 373.6L605.0 359.4Q606.5 359.0 607.1 360.4L615.4 381.1Q616.0 382.5 614.6 382.9L558.9 398.1Q557.5 398.5 557.0 397.1L548.5 375.4Q548.0 374.0 549.5 373.6Z" fill="#555" opacity="0.55"/>
<path d="M520.0 217.0C522.1 223.4 529.1 244.7 532.7 255.3C536.3 265.9 537.6 270.4 541.5 280.4C545.4 290.4 551.5 303.3 555.9 315.2C560.3 327.1 565.8 345.5 567.8 351.6" fill="none" stroke="#3bd23b" stroke-width="0.8"/>
<path d="M434.0 322.7C439.6 321.8 454.7 319.8 467.9 317.2C481.1 314.6 499.0 309.7 513.2 307.1C527.5 304.5 546.7 302.3 553.4 301.4" fill="none" stroke="#3bd23b" stroke-width="0.8"/>
<path d="M530.4 253.5L536.6 252.0Q541.0 251.0 542.6 255.2L543.9 258.3Q545.5 262.5 541.2 263.7L534.8 265.3Q530.5 266.5 528.9 262.3L527.6 258.7Q526.0 254.5 530.4 253.5Z M621.1 232.1L613.0 243.9A4.6 4.6 0 0 0 620.6 249.1L628.7 237.3A4.6 4.6 0 0 0 621.1 232.1Z M641.2 309.4L660.1 297.7A5 5 0 0 0 654.9 289.1L636.0 300.8A5 5 0 0 0 641.2 309.4Z M593.8 276.7A8 8 0 1 0 609.8 276.7A8 8 0 1 0 593.8 276.7Z M569.8 263.9L580.0 268.5A3 3 0 0 0 582.4 263.1L572.2 258.5A3 3 0 0 0 569.8 263.9Z M482.3 306.4A8.3 8.3 0 1 0 498.9 306.4A8.3 8.3 0 1 0 482.3 306.4Z M432.8 292.8L454.8 303.1A5.3 5.3 0 0 0 459.2 293.5L437.2 283.2A5.3 5.3 0 0 0 432.8 292.8Z M456.6 353.9L482.1 355.7A6.3 6.3 0 0 0 482.9 343.1L457.4 341.3A6.3 6.3 0 0 0 456.6 353.9Z M492.2 366.1L485.9 377.3A5 5 0 0 0 494.7 382.3L501.0 371.1A5 5 0 0 0 492.2 366.1Z M512.2 321.9L529.4 328.5A5 5 0 0 0 533.0 319.1L515.8 312.5A5 5 0 0 0 512.2 321.9Z M558.8 326.8L562.3 325.6Q566.6 324.2 568.2 328.4L573.8 343.8Q575.4 348.0 571.2 349.5L566.2 351.3Q562.0 352.8 560.7 348.5L555.8 332.5Q554.5 328.2 558.8 326.8Z M612.4 335.5L607.4 344.8A5 5 0 0 0 616.2 349.6L621.2 340.3A5 5 0 0 0 612.4 335.5Z M636.5 333.6L651.1 339.7A5 5 0 0 0 654.9 330.5L640.3 324.4A5 5 0 0 0 636.5 333.6Z M519.9 366.4L529.4 373.6A4 4 0 0 0 534.2 367.2L524.7 360.0A4 4 0 0 0 519.9 366.4Z M542.8 370.9L606.6 354.4Q609.0 353.8 609.8 356.2L619.2 382.4Q620.0 384.8 617.6 385.4L553.9 402.0Q551.5 402.6 550.7 400.2L541.2 373.9Q540.4 371.5 542.8 370.9Z M549.5 373.6L605.0 359.4Q606.5 359.0 607.1 360.4L615.4 381.1Q616.0 382.5 614.6 382.9L558.9 398.1Q557.5 398.5 557.0 397.1L548.5 375.4Q548.0 374.0 549.5 373.6Z M468.0 231.0C469.2 228.9 471.8 228.3 474.3 227.7C476.8 227.1 480.7 226.8 483.0 227.5C485.3 228.2 486.6 229.0 488.0 231.6C489.4 234.2 489.9 239.1 491.1 242.8C492.3 246.5 493.9 250.8 495.1 254.0C496.3 257.2 497.9 258.3 498.3 262.0C498.7 265.7 499.0 272.0 497.5 276.0C496.0 280.0 492.4 283.7 489.5 285.9C486.6 288.1 483.1 289.1 479.9 289.1C476.7 289.1 473.3 287.5 470.4 285.9C467.5 284.3 464.0 281.9 462.4 279.5C460.8 277.1 460.3 274.4 460.8 271.5C461.3 268.6 464.7 265.4 465.6 262.0C466.5 258.6 466.2 254.5 466.4 250.8C466.6 247.1 466.7 243.3 467.0 240.0C467.3 236.7 466.8 233.1 468.0 231.0Z M498.3 227.4L501.8 243.5A4.3 4.3 0 0 0 510.2 241.7L506.7 225.6A4.3 4.3 0 0 0 498.3 227.4Z M516.9 224.2L527.2 221.1Q531.5 219.8 533.3 223.9L538.7 236.4Q540.5 240.5 536.2 241.9L523.3 246.2Q519.0 247.6 517.7 243.3L513.9 229.8Q512.6 225.5 516.9 224.2Z M540.7 219.6L545.8 234.1A4.8 4.8 0 0 0 554.8 230.9L549.7 216.4A4.8 4.8 0 0 0 540.7 219.6Z M556.5 212.6C559.0 210.1 566.4 207.6 570.4 207.6C574.4 207.6 577.5 209.7 580.4 212.6C583.3 215.5 584.5 221.8 587.9 225.2C591.2 228.5 597.1 229.8 600.5 232.7C603.9 235.6 607.6 239.3 608.0 242.7C608.4 246.0 605.5 250.1 603.0 252.8C600.5 255.5 597.6 258.7 593.0 259.1C588.4 259.5 580.0 257.6 575.4 255.3C570.8 253.0 567.8 248.7 565.3 245.3C562.8 242.0 562.0 239.0 560.3 235.2C558.6 231.4 555.9 226.4 555.3 222.6C554.7 218.8 554.0 215.1 556.5 212.6Z M645.7 235.2C648.2 235.4 651.4 237.7 653.3 241.5C655.2 245.3 655.8 251.7 657.0 257.8C658.2 263.9 661.8 273.5 660.8 277.9C659.8 282.3 655.0 281.9 650.8 284.2C646.6 286.5 639.5 290.6 635.7 291.7C631.9 292.8 630.2 292.8 628.1 290.5C626.0 288.2 623.7 282.1 623.1 277.9C622.5 273.7 623.1 269.5 624.4 265.3C625.7 261.1 628.4 257.0 630.7 252.8C633.0 248.6 635.7 243.1 638.2 240.2C640.7 237.3 643.2 235.0 645.7 235.2Z M512.7 300.3C511.9 296.5 514.8 289.4 517.7 285.2C520.6 281.0 525.8 277.6 530.3 275.2C534.8 272.8 540.4 271.4 545.0 270.6C549.6 269.8 552.5 269.0 558.0 270.2C563.5 271.4 573.8 275.0 578.0 277.7C582.2 280.4 583.4 282.7 583.0 286.5C582.6 290.3 578.9 296.1 575.5 300.3C572.1 304.5 568.4 309.2 562.9 311.6C557.4 314.0 549.5 315.5 542.8 314.9C536.1 314.3 527.7 310.2 522.7 307.8C517.7 305.4 513.5 304.1 512.7 300.3Z M422.7 303.9C425.4 301.0 435.7 299.1 442.8 300.1C449.9 301.2 459.9 306.9 465.4 310.2C470.8 313.5 473.2 316.2 475.5 320.2C477.8 324.2 481.4 331.3 479.3 334.0C477.2 336.7 468.1 336.3 462.9 336.5C457.6 336.7 452.4 336.8 447.8 335.3C443.2 333.8 438.9 330.6 435.3 327.7C431.8 324.8 428.6 321.7 426.5 317.7C424.4 313.7 420.0 306.8 422.7 303.9Z M508.8 327.7C510.9 326.9 515.3 328.1 520.1 330.2C524.9 332.3 532.9 336.9 537.7 340.3C542.5 343.7 548.2 347.7 549.0 350.3C549.8 352.9 546.3 355.2 542.7 355.8C539.1 356.4 532.2 355.9 527.6 354.1C523.0 352.4 518.5 348.5 515.1 345.3C511.8 342.1 508.6 338.1 507.5 335.2C506.4 332.3 506.7 328.5 508.8 327.7Z M591.0 295.0C593.0 294.1 595.8 294.5 598.0 295.5C600.2 296.5 602.6 298.2 604.0 301.0C605.4 303.8 606.8 307.5 606.5 312.0C606.2 316.5 603.8 323.3 602.0 328.0C600.2 332.7 597.9 337.3 596.0 340.0C594.1 342.7 592.5 344.0 590.6 344.0C588.7 344.0 586.0 342.7 584.5 340.0C583.0 337.3 581.9 332.5 581.5 328.0C581.1 323.5 581.2 317.5 582.0 313.0C582.8 308.5 584.5 304.0 586.0 301.0C587.5 298.0 589.0 295.9 591.0 295.0Z M628.1 344.0C631.0 341.7 636.5 343.2 640.7 344.0C644.9 344.8 650.8 346.7 653.3 349.0C655.8 351.3 656.6 354.7 655.8 357.8C654.9 360.9 651.6 365.2 648.2 367.9C644.9 370.6 639.5 373.8 635.7 374.2C631.9 374.6 627.7 373.1 625.6 370.4C623.5 367.7 622.7 362.2 623.1 357.8C623.5 353.4 625.2 346.3 628.1 344.0Z M507.9 377.0C510.4 376.4 513.3 375.3 517.9 377.0C522.5 378.7 531.7 383.6 535.5 387.0C539.3 390.4 541.4 394.6 540.6 397.1C539.8 399.6 535.1 401.7 530.5 402.1C525.9 402.5 517.7 401.5 512.9 399.6C508.1 397.7 503.3 393.9 501.6 390.8C499.9 387.7 501.8 383.1 502.9 380.8C503.9 378.5 505.4 377.6 507.9 377.0Z" fill="none" stroke="#ea70e6" stroke-width="3.6" stroke-linejoin="round" opacity="0.4"/>
<path d="M530.4 253.5L536.6 252.0Q541.0 251.0 542.6 255.2L543.9 258.3Q545.5 262.5 541.2 263.7L534.8 265.3Q530.5 266.5 528.9 262.3L527.6 258.7Q526.0 254.5 530.4 253.5Z M621.1 232.1L613.0 243.9A4.6 4.6 0 0 0 620.6 249.1L628.7 237.3A4.6 4.6 0 0 0 621.1 232.1Z M641.2 309.4L660.1 297.7A5 5 0 0 0 654.9 289.1L636.0 300.8A5 5 0 0 0 641.2 309.4Z M593.8 276.7A8 8 0 1 0 609.8 276.7A8 8 0 1 0 593.8 276.7Z M569.8 263.9L580.0 268.5A3 3 0 0 0 582.4 263.1L572.2 258.5A3 3 0 0 0 569.8 263.9Z M482.3 306.4A8.3 8.3 0 1 0 498.9 306.4A8.3 8.3 0 1 0 482.3 306.4Z M432.8 292.8L454.8 303.1A5.3 5.3 0 0 0 459.2 293.5L437.2 283.2A5.3 5.3 0 0 0 432.8 292.8Z M456.6 353.9L482.1 355.7A6.3 6.3 0 0 0 482.9 343.1L457.4 341.3A6.3 6.3 0 0 0 456.6 353.9Z M492.2 366.1L485.9 377.3A5 5 0 0 0 494.7 382.3L501.0 371.1A5 5 0 0 0 492.2 366.1Z M512.2 321.9L529.4 328.5A5 5 0 0 0 533.0 319.1L515.8 312.5A5 5 0 0 0 512.2 321.9Z M558.8 326.8L562.3 325.6Q566.6 324.2 568.2 328.4L573.8 343.8Q575.4 348.0 571.2 349.5L566.2 351.3Q562.0 352.8 560.7 348.5L555.8 332.5Q554.5 328.2 558.8 326.8Z M612.4 335.5L607.4 344.8A5 5 0 0 0 616.2 349.6L621.2 340.3A5 5 0 0 0 612.4 335.5Z M636.5 333.6L651.1 339.7A5 5 0 0 0 654.9 330.5L640.3 324.4A5 5 0 0 0 636.5 333.6Z M519.9 366.4L529.4 373.6A4 4 0 0 0 534.2 367.2L524.7 360.0A4 4 0 0 0 519.9 366.4Z M542.8 370.9L606.6 354.4Q609.0 353.8 609.8 356.2L619.2 382.4Q620.0 384.8 617.6 385.4L553.9 402.0Q551.5 402.6 550.7 400.2L541.2 373.9Q540.4 371.5 542.8 370.9Z M549.5 373.6L605.0 359.4Q606.5 359.0 607.1 360.4L615.4 381.1Q616.0 382.5 614.6 382.9L558.9 398.1Q557.5 398.5 557.0 397.1L548.5 375.4Q548.0 374.0 549.5 373.6Z M468.0 231.0C469.2 228.9 471.8 228.3 474.3 227.7C476.8 227.1 480.7 226.8 483.0 227.5C485.3 228.2 486.6 229.0 488.0 231.6C489.4 234.2 489.9 239.1 491.1 242.8C492.3 246.5 493.9 250.8 495.1 254.0C496.3 257.2 497.9 258.3 498.3 262.0C498.7 265.7 499.0 272.0 497.5 276.0C496.0 280.0 492.4 283.7 489.5 285.9C486.6 288.1 483.1 289.1 479.9 289.1C476.7 289.1 473.3 287.5 470.4 285.9C467.5 284.3 464.0 281.9 462.4 279.5C460.8 277.1 460.3 274.4 460.8 271.5C461.3 268.6 464.7 265.4 465.6 262.0C466.5 258.6 466.2 254.5 466.4 250.8C466.6 247.1 466.7 243.3 467.0 240.0C467.3 236.7 466.8 233.1 468.0 231.0Z M498.3 227.4L501.8 243.5A4.3 4.3 0 0 0 510.2 241.7L506.7 225.6A4.3 4.3 0 0 0 498.3 227.4Z M516.9 224.2L527.2 221.1Q531.5 219.8 533.3 223.9L538.7 236.4Q540.5 240.5 536.2 241.9L523.3 246.2Q519.0 247.6 517.7 243.3L513.9 229.8Q512.6 225.5 516.9 224.2Z M540.7 219.6L545.8 234.1A4.8 4.8 0 0 0 554.8 230.9L549.7 216.4A4.8 4.8 0 0 0 540.7 219.6Z M556.5 212.6C559.0 210.1 566.4 207.6 570.4 207.6C574.4 207.6 577.5 209.7 580.4 212.6C583.3 215.5 584.5 221.8 587.9 225.2C591.2 228.5 597.1 229.8 600.5 232.7C603.9 235.6 607.6 239.3 608.0 242.7C608.4 246.0 605.5 250.1 603.0 252.8C600.5 255.5 597.6 258.7 593.0 259.1C588.4 259.5 580.0 257.6 575.4 255.3C570.8 253.0 567.8 248.7 565.3 245.3C562.8 242.0 562.0 239.0 560.3 235.2C558.6 231.4 555.9 226.4 555.3 222.6C554.7 218.8 554.0 215.1 556.5 212.6Z M645.7 235.2C648.2 235.4 651.4 237.7 653.3 241.5C655.2 245.3 655.8 251.7 657.0 257.8C658.2 263.9 661.8 273.5 660.8 277.9C659.8 282.3 655.0 281.9 650.8 284.2C646.6 286.5 639.5 290.6 635.7 291.7C631.9 292.8 630.2 292.8 628.1 290.5C626.0 288.2 623.7 282.1 623.1 277.9C622.5 273.7 623.1 269.5 624.4 265.3C625.7 261.1 628.4 257.0 630.7 252.8C633.0 248.6 635.7 243.1 638.2 240.2C640.7 237.3 643.2 235.0 645.7 235.2Z M512.7 300.3C511.9 296.5 514.8 289.4 517.7 285.2C520.6 281.0 525.8 277.6 530.3 275.2C534.8 272.8 540.4 271.4 545.0 270.6C549.6 269.8 552.5 269.0 558.0 270.2C563.5 271.4 573.8 275.0 578.0 277.7C582.2 280.4 583.4 282.7 583.0 286.5C582.6 290.3 578.9 296.1 575.5 300.3C572.1 304.5 568.4 309.2 562.9 311.6C557.4 314.0 549.5 315.5 542.8 314.9C536.1 314.3 527.7 310.2 522.7 307.8C517.7 305.4 513.5 304.1 512.7 300.3Z M422.7 303.9C425.4 301.0 435.7 299.1 442.8 300.1C449.9 301.2 459.9 306.9 465.4 310.2C470.8 313.5 473.2 316.2 475.5 320.2C477.8 324.2 481.4 331.3 479.3 334.0C477.2 336.7 468.1 336.3 462.9 336.5C457.6 336.7 452.4 336.8 447.8 335.3C443.2 333.8 438.9 330.6 435.3 327.7C431.8 324.8 428.6 321.7 426.5 317.7C424.4 313.7 420.0 306.8 422.7 303.9Z M508.8 327.7C510.9 326.9 515.3 328.1 520.1 330.2C524.9 332.3 532.9 336.9 537.7 340.3C542.5 343.7 548.2 347.7 549.0 350.3C549.8 352.9 546.3 355.2 542.7 355.8C539.1 356.4 532.2 355.9 527.6 354.1C523.0 352.4 518.5 348.5 515.1 345.3C511.8 342.1 508.6 338.1 507.5 335.2C506.4 332.3 506.7 328.5 508.8 327.7Z M591.0 295.0C593.0 294.1 595.8 294.5 598.0 295.5C600.2 296.5 602.6 298.2 604.0 301.0C605.4 303.8 606.8 307.5 606.5 312.0C606.2 316.5 603.8 323.3 602.0 328.0C600.2 332.7 597.9 337.3 596.0 340.0C594.1 342.7 592.5 344.0 590.6 344.0C588.7 344.0 586.0 342.7 584.5 340.0C583.0 337.3 581.9 332.5 581.5 328.0C581.1 323.5 581.2 317.5 582.0 313.0C582.8 308.5 584.5 304.0 586.0 301.0C587.5 298.0 589.0 295.9 591.0 295.0Z M628.1 344.0C631.0 341.7 636.5 343.2 640.7 344.0C644.9 344.8 650.8 346.7 653.3 349.0C655.8 351.3 656.6 354.7 655.8 357.8C654.9 360.9 651.6 365.2 648.2 367.9C644.9 370.6 639.5 373.8 635.7 374.2C631.9 374.6 627.7 373.1 625.6 370.4C623.5 367.7 622.7 362.2 623.1 357.8C623.5 353.4 625.2 346.3 628.1 344.0Z M507.9 377.0C510.4 376.4 513.3 375.3 517.9 377.0C522.5 378.7 531.7 383.6 535.5 387.0C539.3 390.4 541.4 394.6 540.6 397.1C539.8 399.6 535.1 401.7 530.5 402.1C525.9 402.5 517.7 401.5 512.9 399.6C508.1 397.7 503.3 393.9 501.6 390.8C499.9 387.7 501.8 383.1 502.9 380.8C503.9 378.5 505.4 377.6 507.9 377.0Z" fill="none" stroke="#e844e0" stroke-width="1.9" stroke-linejoin="round"/>
<path d="M530.4 253.5L536.6 252.0Q541.0 251.0 542.6 255.2L543.9 258.3Q545.5 262.5 541.2 263.7L534.8 265.3Q530.5 266.5 528.9 262.3L527.6 258.7Q526.0 254.5 530.4 253.5Z M621.1 232.1L613.0 243.9A4.6 4.6 0 0 0 620.6 249.1L628.7 237.3A4.6 4.6 0 0 0 621.1 232.1Z M641.2 309.4L660.1 297.7A5 5 0 0 0 654.9 289.1L636.0 300.8A5 5 0 0 0 641.2 309.4Z M593.8 276.7A8 8 0 1 0 609.8 276.7A8 8 0 1 0 593.8 276.7Z M569.8 263.9L580.0 268.5A3 3 0 0 0 582.4 263.1L572.2 258.5A3 3 0 0 0 569.8 263.9Z M482.3 306.4A8.3 8.3 0 1 0 498.9 306.4A8.3 8.3 0 1 0 482.3 306.4Z M432.8 292.8L454.8 303.1A5.3 5.3 0 0 0 459.2 293.5L437.2 283.2A5.3 5.3 0 0 0 432.8 292.8Z M456.6 353.9L482.1 355.7A6.3 6.3 0 0 0 482.9 343.1L457.4 341.3A6.3 6.3 0 0 0 456.6 353.9Z M492.2 366.1L485.9 377.3A5 5 0 0 0 494.7 382.3L501.0 371.1A5 5 0 0 0 492.2 366.1Z M512.2 321.9L529.4 328.5A5 5 0 0 0 533.0 319.1L515.8 312.5A5 5 0 0 0 512.2 321.9Z M558.8 326.8L562.3 325.6Q566.6 324.2 568.2 328.4L573.8 343.8Q575.4 348.0 571.2 349.5L566.2 351.3Q562.0 352.8 560.7 348.5L555.8 332.5Q554.5 328.2 558.8 326.8Z M612.4 335.5L607.4 344.8A5 5 0 0 0 616.2 349.6L621.2 340.3A5 5 0 0 0 612.4 335.5Z M636.5 333.6L651.1 339.7A5 5 0 0 0 654.9 330.5L640.3 324.4A5 5 0 0 0 636.5 333.6Z M519.9 366.4L529.4 373.6A4 4 0 0 0 534.2 367.2L524.7 360.0A4 4 0 0 0 519.9 366.4Z M542.8 370.9L606.6 354.4Q609.0 353.8 609.8 356.2L619.2 382.4Q620.0 384.8 617.6 385.4L553.9 402.0Q551.5 402.6 550.7 400.2L541.2 373.9Q540.4 371.5 542.8 370.9Z M549.5 373.6L605.0 359.4Q606.5 359.0 607.1 360.4L615.4 381.1Q616.0 382.5 614.6 382.9L558.9 398.1Q557.5 398.5 557.0 397.1L548.5 375.4Q548.0 374.0 549.5 373.6Z M468.0 231.0C469.2 228.9 471.8 228.3 474.3 227.7C476.8 227.1 480.7 226.8 483.0 227.5C485.3 228.2 486.6 229.0 488.0 231.6C489.4 234.2 489.9 239.1 491.1 242.8C492.3 246.5 493.9 250.8 495.1 254.0C496.3 257.2 497.9 258.3 498.3 262.0C498.7 265.7 499.0 272.0 497.5 276.0C496.0 280.0 492.4 283.7 489.5 285.9C486.6 288.1 483.1 289.1 479.9 289.1C476.7 289.1 473.3 287.5 470.4 285.9C467.5 284.3 464.0 281.9 462.4 279.5C460.8 277.1 460.3 274.4 460.8 271.5C461.3 268.6 464.7 265.4 465.6 262.0C466.5 258.6 466.2 254.5 466.4 250.8C466.6 247.1 466.7 243.3 467.0 240.0C467.3 236.7 466.8 233.1 468.0 231.0Z M498.3 227.4L501.8 243.5A4.3 4.3 0 0 0 510.2 241.7L506.7 225.6A4.3 4.3 0 0 0 498.3 227.4Z M516.9 224.2L527.2 221.1Q531.5 219.8 533.3 223.9L538.7 236.4Q540.5 240.5 536.2 241.9L523.3 246.2Q519.0 247.6 517.7 243.3L513.9 229.8Q512.6 225.5 516.9 224.2Z M540.7 219.6L545.8 234.1A4.8 4.8 0 0 0 554.8 230.9L549.7 216.4A4.8 4.8 0 0 0 540.7 219.6Z M556.5 212.6C559.0 210.1 566.4 207.6 570.4 207.6C574.4 207.6 577.5 209.7 580.4 212.6C583.3 215.5 584.5 221.8 587.9 225.2C591.2 228.5 597.1 229.8 600.5 232.7C603.9 235.6 607.6 239.3 608.0 242.7C608.4 246.0 605.5 250.1 603.0 252.8C600.5 255.5 597.6 258.7 593.0 259.1C588.4 259.5 580.0 257.6 575.4 255.3C570.8 253.0 567.8 248.7 565.3 245.3C562.8 242.0 562.0 239.0 560.3 235.2C558.6 231.4 555.9 226.4 555.3 222.6C554.7 218.8 554.0 215.1 556.5 212.6Z M645.7 235.2C648.2 235.4 651.4 237.7 653.3 241.5C655.2 245.3 655.8 251.7 657.0 257.8C658.2 263.9 661.8 273.5 660.8 277.9C659.8 282.3 655.0 281.9 650.8 284.2C646.6 286.5 639.5 290.6 635.7 291.7C631.9 292.8 630.2 292.8 628.1 290.5C626.0 288.2 623.7 282.1 623.1 277.9C622.5 273.7 623.1 269.5 624.4 265.3C625.7 261.1 628.4 257.0 630.7 252.8C633.0 248.6 635.7 243.1 638.2 240.2C640.7 237.3 643.2 235.0 645.7 235.2Z M512.7 300.3C511.9 296.5 514.8 289.4 517.7 285.2C520.6 281.0 525.8 277.6 530.3 275.2C534.8 272.8 540.4 271.4 545.0 270.6C549.6 269.8 552.5 269.0 558.0 270.2C563.5 271.4 573.8 275.0 578.0 277.7C582.2 280.4 583.4 282.7 583.0 286.5C582.6 290.3 578.9 296.1 575.5 300.3C572.1 304.5 568.4 309.2 562.9 311.6C557.4 314.0 549.5 315.5 542.8 314.9C536.1 314.3 527.7 310.2 522.7 307.8C517.7 305.4 513.5 304.1 512.7 300.3Z M422.7 303.9C425.4 301.0 435.7 299.1 442.8 300.1C449.9 301.2 459.9 306.9 465.4 310.2C470.8 313.5 473.2 316.2 475.5 320.2C477.8 324.2 481.4 331.3 479.3 334.0C477.2 336.7 468.1 336.3 462.9 336.5C457.6 336.7 452.4 336.8 447.8 335.3C443.2 333.8 438.9 330.6 435.3 327.7C431.8 324.8 428.6 321.7 426.5 317.7C424.4 313.7 420.0 306.8 422.7 303.9Z M508.8 327.7C510.9 326.9 515.3 328.1 520.1 330.2C524.9 332.3 532.9 336.9 537.7 340.3C542.5 343.7 548.2 347.7 549.0 350.3C549.8 352.9 546.3 355.2 542.7 355.8C539.1 356.4 532.2 355.9 527.6 354.1C523.0 352.4 518.5 348.5 515.1 345.3C511.8 342.1 508.6 338.1 507.5 335.2C506.4 332.3 506.7 328.5 508.8 327.7Z M591.0 295.0C593.0 294.1 595.8 294.5 598.0 295.5C600.2 296.5 602.6 298.2 604.0 301.0C605.4 303.8 606.8 307.5 606.5 312.0C606.2 316.5 603.8 323.3 602.0 328.0C600.2 332.7 597.9 337.3 596.0 340.0C594.1 342.7 592.5 344.0 590.6 344.0C588.7 344.0 586.0 342.7 584.5 340.0C583.0 337.3 581.9 332.5 581.5 328.0C581.1 323.5 581.2 317.5 582.0 313.0C582.8 308.5 584.5 304.0 586.0 301.0C587.5 298.0 589.0 295.9 591.0 295.0Z M628.1 344.0C631.0 341.7 636.5 343.2 640.7 344.0C644.9 344.8 650.8 346.7 653.3 349.0C655.8 351.3 656.6 354.7 655.8 357.8C654.9 360.9 651.6 365.2 648.2 367.9C644.9 370.6 639.5 373.8 635.7 374.2C631.9 374.6 627.7 373.1 625.6 370.4C623.5 367.7 622.7 362.2 623.1 357.8C623.5 353.4 625.2 346.3 628.1 344.0Z M507.9 377.0C510.4 376.4 513.3 375.3 517.9 377.0C522.5 378.7 531.7 383.6 535.5 387.0C539.3 390.4 541.4 394.6 540.6 397.1C539.8 399.6 535.1 401.7 530.5 402.1C525.9 402.5 517.7 401.5 512.9 399.6C508.1 397.7 503.3 393.9 501.6 390.8C499.9 387.7 501.8 383.1 502.9 380.8C503.9 378.5 505.4 377.6 507.9 377.0Z" fill="none" stroke="#fcd6fa" stroke-width="2.2" stroke-dasharray="1.5 9.5 1.3 14 1.7 7.5 1.4 12" opacity="0.75"/>
<path d="M650.1 188.6C650.7 191.1 652.2 195.9 653.8 203.4C655.5 210.8 658.0 223.0 660.1 233.2C662.1 243.4 664.3 254.8 666.1 264.5C668.0 274.3 670.0 283.4 671.2 291.9C672.4 300.4 673.1 307.6 673.4 315.5C673.7 323.3 673.2 333.6 672.8 339.0C672.5 344.3 672.1 343.9 671.1 347.4C670.1 350.9 668.9 356.2 666.8 360.0C664.7 363.8 662.5 366.7 658.6 369.9C654.7 373.2 649.3 376.3 643.2 379.5C637.0 382.6 629.0 385.9 621.8 389.0C614.6 392.0 607.3 395.2 600.2 397.7C593.1 400.2 586.2 402.2 579.1 404.0C572.0 405.8 563.5 407.3 557.6 408.3C551.8 409.3 549.0 409.8 543.8 410.3C538.6 410.7 533.0 411.5 526.4 411.1C519.7 410.7 510.5 409.7 504.0 407.9C497.5 406.1 492.6 403.8 487.3 400.5C482.0 397.3 477.4 393.7 472.1 388.6C466.9 383.5 461.0 376.8 455.9 370.0C450.8 363.3 446.2 355.5 441.4 348.1C436.5 340.8 431.8 334.1 426.9 325.9C422.0 317.6 415.8 305.6 412.1 298.7C408.4 291.8 406.9 288.4 404.9 284.4C402.8 280.4 401.5 278.1 399.9 274.5C398.3 270.9 396.0 264.7 395.2 262.8 M443.8 226.4C445.7 225.6 451.1 222.8 455.1 221.4C459.1 220.1 462.5 219.8 467.7 218.3C472.9 216.8 480.2 214.5 486.5 212.6C492.8 210.7 500.6 208.5 505.4 207.0C510.2 205.5 511.3 205.0 515.4 203.8C519.5 202.6 524.1 201.5 530.0 200.0C535.9 198.5 543.4 196.5 550.6 194.6C557.8 192.7 566.9 190.2 573.2 188.8C579.5 187.4 585.7 186.7 588.2 186.3 M474.0 226.4C477.1 226.0 487.6 224.6 492.8 223.9C498.0 223.2 500.9 222.9 505.4 222.0C509.9 221.1 513.9 220.6 520.0 218.6C526.1 216.6 535.9 212.4 541.9 209.9C547.9 207.4 552.3 204.9 556.0 203.5C559.7 202.1 561.3 201.5 564.0 201.3C566.7 201.1 569.5 200.9 572.2 202.3C574.9 203.7 578.1 207.0 580.2 209.9C582.3 212.8 583.3 216.9 585.0 219.5C586.7 222.1 587.9 223.7 590.5 225.5C593.1 227.3 596.9 229.7 600.5 230.5C604.1 231.3 607.8 231.1 612.0 230.5C616.2 229.9 620.8 227.6 625.6 226.8C630.4 226.0 636.5 224.9 640.7 225.5C644.9 226.1 647.4 227.9 650.8 230.2C654.1 232.4 658.1 235.4 660.8 239.0C663.5 242.6 665.3 246.8 667.0 252.0C668.7 257.2 669.8 263.7 671.0 270.0C672.2 276.3 673.5 286.7 674.0 290.0 M409.0 223.9C414.6 223.1 424.8 222.7 430.4 223.1C436.0 223.5 439.8 224.0 442.9 226.4C446.0 228.8 447.5 233.3 449.2 237.7C450.9 242.1 452.8 248.6 453.0 252.8C453.2 257.0 452.6 259.9 450.5 262.8C448.4 265.7 445.0 268.1 440.4 270.4C435.8 272.7 427.8 276.9 422.8 276.7C417.8 276.5 414.1 271.8 410.3 269.1C406.5 266.4 403.1 263.4 400.2 260.3C397.3 257.2 394.4 254.1 392.7 250.3C391.0 246.5 389.6 241.5 390.2 237.7C390.8 233.9 393.4 230.0 396.5 227.7C399.6 225.4 403.4 224.7 409.0 223.9Z M407.8 212.1L413.3 223.9 M437.5 210.1C438.6 212.8 441.9 220.9 443.8 226.4C445.7 231.9 448.0 240.1 448.8 242.8 M382.6 260.8L396.5 256.6 M613.1 169.0C617.7 166.3 621.6 163.1 625.6 162.7C629.6 162.3 633.8 164.4 636.9 166.5C640.0 168.6 642.6 171.5 644.5 175.3C646.4 179.1 648.4 184.5 648.2 189.1C648.0 193.7 644.9 199.1 643.2 202.9C641.5 206.7 641.1 209.2 638.2 211.7C635.3 214.2 630.2 216.3 625.6 218.0C621.0 219.7 614.8 222.1 610.6 221.7C606.4 221.3 603.4 218.6 600.5 215.5C597.6 212.4 594.5 207.1 593.0 202.9C591.5 198.7 590.9 194.3 591.7 190.3C592.5 186.3 594.4 182.6 598.0 179.0C601.6 175.4 608.5 171.7 613.1 169.0Z M610.6 156.4L613.1 169.0 M584.2 170.2C585.0 172.9 587.7 181.1 589.2 186.6C590.7 192.1 592.4 200.2 593.0 202.9 M648.2 189.1L663.3 184.8 M638.2 211.7C638.6 214.0 639.7 221.6 640.7 225.5C641.8 229.4 643.9 233.4 644.5 235.0 M512.9 198.2C513.3 199.1 514.2 200.4 515.4 203.8C516.6 207.2 519.2 216.1 520.0 218.6 M530.5 403.4L533.0 422.2 M590.8 393.3L593.3 410.9 M489.0 351.9C490.7 352.4 496.0 357.4 499.1 355.1C502.2 352.8 506.4 340.9 507.9 338.0 M499.1 355.1L497.0 364.0 M608.0 243.0L611.0 268.0 M609.8 276.0L623.5 271.5 M482.5 312.0L465.4 310.2 M605.5 310.1C609.5 311.8 624.2 317.3 629.4 320.2C634.6 323.1 635.6 326.4 636.9 327.7 M629.4 320.2L635.7 311.4 M628.5 344.0L634.0 333.0 M556.5 313.9L559.5 327.7 M608.0 355.3L611.8 349.0 M618.1 385.5L640.7 375.4 M644.5 372.9L650.8 384.2 M549.0 350.3L555.0 343.0 M535.2 325.2L533.0 312.6 M412.7 308.9L424.0 303.9 M415.2 326.5L430.3 322.7 M427.7 346.6L452.9 342.8 M445.3 375.5L455.4 368.0 M475.5 307.6L481.8 306.4 M499.3 303.9L513.2 300.1 M479.3 334.0L489.3 349.1 M534.5 326.5L553.4 332.8 M422.8 276.7C422.2 277.3 420.5 277.3 419.0 280.4C417.5 283.5 415.0 291.4 414.0 295.5C413.0 299.6 413.0 303.4 412.8 305.0 M427.9 279.2C427.0 281.9 423.9 291.2 422.8 295.5C421.8 299.8 421.8 303.4 421.6 305.0 M453.0 252.8C453.2 255.3 453.7 264.1 454.3 267.9C454.9 271.7 455.5 273.3 456.8 275.4C458.1 277.5 461.1 279.6 462.0 280.5 M488.2 289.2L490.0 298.0 M498.2 255.3L505.8 249.0 M530.9 249.0L533.4 253.3 M533.0 266.0L531.5 270.5 M594.2 277.9L581.0 279.2 M575.4 255.3L574.0 260.8 M623.0 232.7L620.6 227.7 M659.5 262.0L670.5 259.0 M645.7 235.2L643.2 226.4 M545.2 215.1L544.0 206.0 M570.0 207.6L569.0 199.8 M502.5 223.0L501.5 218.8 M521.0 221.5L520.0 217.0 M462.0 382.0L473.0 372.0 M480.0 399.0L489.0 388.0 M507.0 409.0L511.0 399.5 M560.0 405.5L562.0 420.5 M622.0 391.0L626.0 401.5 M655.0 345.0L671.5 339.0 M657.0 330.0L673.0 322.0 M660.8 290.0L674.0 284.0 M398.0 268.0L404.0 264.5 M404.5 296.0L413.0 292.0" fill="none" stroke="#e067da" stroke-width="2.6" opacity="0.3"/>
<path d="M650.1 188.6C650.7 191.1 652.2 195.9 653.8 203.4C655.5 210.8 658.0 223.0 660.1 233.2C662.1 243.4 664.3 254.8 666.1 264.5C668.0 274.3 670.0 283.4 671.2 291.9C672.4 300.4 673.1 307.6 673.4 315.5C673.7 323.3 673.2 333.6 672.8 339.0C672.5 344.3 672.1 343.9 671.1 347.4C670.1 350.9 668.9 356.2 666.8 360.0C664.7 363.8 662.5 366.7 658.6 369.9C654.7 373.2 649.3 376.3 643.2 379.5C637.0 382.6 629.0 385.9 621.8 389.0C614.6 392.0 607.3 395.2 600.2 397.7C593.1 400.2 586.2 402.2 579.1 404.0C572.0 405.8 563.5 407.3 557.6 408.3C551.8 409.3 549.0 409.8 543.8 410.3C538.6 410.7 533.0 411.5 526.4 411.1C519.7 410.7 510.5 409.7 504.0 407.9C497.5 406.1 492.6 403.8 487.3 400.5C482.0 397.3 477.4 393.7 472.1 388.6C466.9 383.5 461.0 376.8 455.9 370.0C450.8 363.3 446.2 355.5 441.4 348.1C436.5 340.8 431.8 334.1 426.9 325.9C422.0 317.6 415.8 305.6 412.1 298.7C408.4 291.8 406.9 288.4 404.9 284.4C402.8 280.4 401.5 278.1 399.9 274.5C398.3 270.9 396.0 264.7 395.2 262.8 M443.8 226.4C445.7 225.6 451.1 222.8 455.1 221.4C459.1 220.1 462.5 219.8 467.7 218.3C472.9 216.8 480.2 214.5 486.5 212.6C492.8 210.7 500.6 208.5 505.4 207.0C510.2 205.5 511.3 205.0 515.4 203.8C519.5 202.6 524.1 201.5 530.0 200.0C535.9 198.5 543.4 196.5 550.6 194.6C557.8 192.7 566.9 190.2 573.2 188.8C579.5 187.4 585.7 186.7 588.2 186.3 M474.0 226.4C477.1 226.0 487.6 224.6 492.8 223.9C498.0 223.2 500.9 222.9 505.4 222.0C509.9 221.1 513.9 220.6 520.0 218.6C526.1 216.6 535.9 212.4 541.9 209.9C547.9 207.4 552.3 204.9 556.0 203.5C559.7 202.1 561.3 201.5 564.0 201.3C566.7 201.1 569.5 200.9 572.2 202.3C574.9 203.7 578.1 207.0 580.2 209.9C582.3 212.8 583.3 216.9 585.0 219.5C586.7 222.1 587.9 223.7 590.5 225.5C593.1 227.3 596.9 229.7 600.5 230.5C604.1 231.3 607.8 231.1 612.0 230.5C616.2 229.9 620.8 227.6 625.6 226.8C630.4 226.0 636.5 224.9 640.7 225.5C644.9 226.1 647.4 227.9 650.8 230.2C654.1 232.4 658.1 235.4 660.8 239.0C663.5 242.6 665.3 246.8 667.0 252.0C668.7 257.2 669.8 263.7 671.0 270.0C672.2 276.3 673.5 286.7 674.0 290.0 M409.0 223.9C414.6 223.1 424.8 222.7 430.4 223.1C436.0 223.5 439.8 224.0 442.9 226.4C446.0 228.8 447.5 233.3 449.2 237.7C450.9 242.1 452.8 248.6 453.0 252.8C453.2 257.0 452.6 259.9 450.5 262.8C448.4 265.7 445.0 268.1 440.4 270.4C435.8 272.7 427.8 276.9 422.8 276.7C417.8 276.5 414.1 271.8 410.3 269.1C406.5 266.4 403.1 263.4 400.2 260.3C397.3 257.2 394.4 254.1 392.7 250.3C391.0 246.5 389.6 241.5 390.2 237.7C390.8 233.9 393.4 230.0 396.5 227.7C399.6 225.4 403.4 224.7 409.0 223.9Z M407.8 212.1L413.3 223.9 M437.5 210.1C438.6 212.8 441.9 220.9 443.8 226.4C445.7 231.9 448.0 240.1 448.8 242.8 M382.6 260.8L396.5 256.6 M613.1 169.0C617.7 166.3 621.6 163.1 625.6 162.7C629.6 162.3 633.8 164.4 636.9 166.5C640.0 168.6 642.6 171.5 644.5 175.3C646.4 179.1 648.4 184.5 648.2 189.1C648.0 193.7 644.9 199.1 643.2 202.9C641.5 206.7 641.1 209.2 638.2 211.7C635.3 214.2 630.2 216.3 625.6 218.0C621.0 219.7 614.8 222.1 610.6 221.7C606.4 221.3 603.4 218.6 600.5 215.5C597.6 212.4 594.5 207.1 593.0 202.9C591.5 198.7 590.9 194.3 591.7 190.3C592.5 186.3 594.4 182.6 598.0 179.0C601.6 175.4 608.5 171.7 613.1 169.0Z M610.6 156.4L613.1 169.0 M584.2 170.2C585.0 172.9 587.7 181.1 589.2 186.6C590.7 192.1 592.4 200.2 593.0 202.9 M648.2 189.1L663.3 184.8 M638.2 211.7C638.6 214.0 639.7 221.6 640.7 225.5C641.8 229.4 643.9 233.4 644.5 235.0 M512.9 198.2C513.3 199.1 514.2 200.4 515.4 203.8C516.6 207.2 519.2 216.1 520.0 218.6 M530.5 403.4L533.0 422.2 M590.8 393.3L593.3 410.9 M489.0 351.9C490.7 352.4 496.0 357.4 499.1 355.1C502.2 352.8 506.4 340.9 507.9 338.0 M499.1 355.1L497.0 364.0 M608.0 243.0L611.0 268.0 M609.8 276.0L623.5 271.5 M482.5 312.0L465.4 310.2 M605.5 310.1C609.5 311.8 624.2 317.3 629.4 320.2C634.6 323.1 635.6 326.4 636.9 327.7 M629.4 320.2L635.7 311.4 M628.5 344.0L634.0 333.0 M556.5 313.9L559.5 327.7 M608.0 355.3L611.8 349.0 M618.1 385.5L640.7 375.4 M644.5 372.9L650.8 384.2 M549.0 350.3L555.0 343.0 M535.2 325.2L533.0 312.6 M412.7 308.9L424.0 303.9 M415.2 326.5L430.3 322.7 M427.7 346.6L452.9 342.8 M445.3 375.5L455.4 368.0 M475.5 307.6L481.8 306.4 M499.3 303.9L513.2 300.1 M479.3 334.0L489.3 349.1 M534.5 326.5L553.4 332.8 M422.8 276.7C422.2 277.3 420.5 277.3 419.0 280.4C417.5 283.5 415.0 291.4 414.0 295.5C413.0 299.6 413.0 303.4 412.8 305.0 M427.9 279.2C427.0 281.9 423.9 291.2 422.8 295.5C421.8 299.8 421.8 303.4 421.6 305.0 M453.0 252.8C453.2 255.3 453.7 264.1 454.3 267.9C454.9 271.7 455.5 273.3 456.8 275.4C458.1 277.5 461.1 279.6 462.0 280.5 M488.2 289.2L490.0 298.0 M498.2 255.3L505.8 249.0 M530.9 249.0L533.4 253.3 M533.0 266.0L531.5 270.5 M594.2 277.9L581.0 279.2 M575.4 255.3L574.0 260.8 M623.0 232.7L620.6 227.7 M659.5 262.0L670.5 259.0 M645.7 235.2L643.2 226.4 M545.2 215.1L544.0 206.0 M570.0 207.6L569.0 199.8 M502.5 223.0L501.5 218.8 M521.0 221.5L520.0 217.0 M462.0 382.0L473.0 372.0 M480.0 399.0L489.0 388.0 M507.0 409.0L511.0 399.5 M560.0 405.5L562.0 420.5 M622.0 391.0L626.0 401.5 M655.0 345.0L671.5 339.0 M657.0 330.0L673.0 322.0 M660.8 290.0L674.0 284.0 M398.0 268.0L404.0 264.5 M404.5 296.0L413.0 292.0" fill="none" stroke="#df4ad8" stroke-width="1.25" stroke-linejoin="round"/>
<path d="M650.1 188.6C650.7 191.1 652.2 195.9 653.8 203.4C655.5 210.8 658.0 223.0 660.1 233.2C662.1 243.4 664.3 254.8 666.1 264.5C668.0 274.3 670.0 283.4 671.2 291.9C672.4 300.4 673.1 307.6 673.4 315.5C673.7 323.3 673.2 333.6 672.8 339.0C672.5 344.3 672.1 343.9 671.1 347.4C670.1 350.9 668.9 356.2 666.8 360.0C664.7 363.8 662.5 366.7 658.6 369.9C654.7 373.2 649.3 376.3 643.2 379.5C637.0 382.6 629.0 385.9 621.8 389.0C614.6 392.0 607.3 395.2 600.2 397.7C593.1 400.2 586.2 402.2 579.1 404.0C572.0 405.8 563.5 407.3 557.6 408.3C551.8 409.3 549.0 409.8 543.8 410.3C538.6 410.7 533.0 411.5 526.4 411.1C519.7 410.7 510.5 409.7 504.0 407.9C497.5 406.1 492.6 403.8 487.3 400.5C482.0 397.3 477.4 393.7 472.1 388.6C466.9 383.5 461.0 376.8 455.9 370.0C450.8 363.3 446.2 355.5 441.4 348.1C436.5 340.8 431.8 334.1 426.9 325.9C422.0 317.6 415.8 305.6 412.1 298.7C408.4 291.8 406.9 288.4 404.9 284.4C402.8 280.4 401.5 278.1 399.9 274.5C398.3 270.9 396.0 264.7 395.2 262.8 M443.8 226.4C445.7 225.6 451.1 222.8 455.1 221.4C459.1 220.1 462.5 219.8 467.7 218.3C472.9 216.8 480.2 214.5 486.5 212.6C492.8 210.7 500.6 208.5 505.4 207.0C510.2 205.5 511.3 205.0 515.4 203.8C519.5 202.6 524.1 201.5 530.0 200.0C535.9 198.5 543.4 196.5 550.6 194.6C557.8 192.7 566.9 190.2 573.2 188.8C579.5 187.4 585.7 186.7 588.2 186.3 M474.0 226.4C477.1 226.0 487.6 224.6 492.8 223.9C498.0 223.2 500.9 222.9 505.4 222.0C509.9 221.1 513.9 220.6 520.0 218.6C526.1 216.6 535.9 212.4 541.9 209.9C547.9 207.4 552.3 204.9 556.0 203.5C559.7 202.1 561.3 201.5 564.0 201.3C566.7 201.1 569.5 200.9 572.2 202.3C574.9 203.7 578.1 207.0 580.2 209.9C582.3 212.8 583.3 216.9 585.0 219.5C586.7 222.1 587.9 223.7 590.5 225.5C593.1 227.3 596.9 229.7 600.5 230.5C604.1 231.3 607.8 231.1 612.0 230.5C616.2 229.9 620.8 227.6 625.6 226.8C630.4 226.0 636.5 224.9 640.7 225.5C644.9 226.1 647.4 227.9 650.8 230.2C654.1 232.4 658.1 235.4 660.8 239.0C663.5 242.6 665.3 246.8 667.0 252.0C668.7 257.2 669.8 263.7 671.0 270.0C672.2 276.3 673.5 286.7 674.0 290.0 M409.0 223.9C414.6 223.1 424.8 222.7 430.4 223.1C436.0 223.5 439.8 224.0 442.9 226.4C446.0 228.8 447.5 233.3 449.2 237.7C450.9 242.1 452.8 248.6 453.0 252.8C453.2 257.0 452.6 259.9 450.5 262.8C448.4 265.7 445.0 268.1 440.4 270.4C435.8 272.7 427.8 276.9 422.8 276.7C417.8 276.5 414.1 271.8 410.3 269.1C406.5 266.4 403.1 263.4 400.2 260.3C397.3 257.2 394.4 254.1 392.7 250.3C391.0 246.5 389.6 241.5 390.2 237.7C390.8 233.9 393.4 230.0 396.5 227.7C399.6 225.4 403.4 224.7 409.0 223.9Z M407.8 212.1L413.3 223.9 M437.5 210.1C438.6 212.8 441.9 220.9 443.8 226.4C445.7 231.9 448.0 240.1 448.8 242.8 M382.6 260.8L396.5 256.6 M613.1 169.0C617.7 166.3 621.6 163.1 625.6 162.7C629.6 162.3 633.8 164.4 636.9 166.5C640.0 168.6 642.6 171.5 644.5 175.3C646.4 179.1 648.4 184.5 648.2 189.1C648.0 193.7 644.9 199.1 643.2 202.9C641.5 206.7 641.1 209.2 638.2 211.7C635.3 214.2 630.2 216.3 625.6 218.0C621.0 219.7 614.8 222.1 610.6 221.7C606.4 221.3 603.4 218.6 600.5 215.5C597.6 212.4 594.5 207.1 593.0 202.9C591.5 198.7 590.9 194.3 591.7 190.3C592.5 186.3 594.4 182.6 598.0 179.0C601.6 175.4 608.5 171.7 613.1 169.0Z M610.6 156.4L613.1 169.0 M584.2 170.2C585.0 172.9 587.7 181.1 589.2 186.6C590.7 192.1 592.4 200.2 593.0 202.9 M648.2 189.1L663.3 184.8 M638.2 211.7C638.6 214.0 639.7 221.6 640.7 225.5C641.8 229.4 643.9 233.4 644.5 235.0 M512.9 198.2C513.3 199.1 514.2 200.4 515.4 203.8C516.6 207.2 519.2 216.1 520.0 218.6 M530.5 403.4L533.0 422.2 M590.8 393.3L593.3 410.9 M489.0 351.9C490.7 352.4 496.0 357.4 499.1 355.1C502.2 352.8 506.4 340.9 507.9 338.0 M499.1 355.1L497.0 364.0 M608.0 243.0L611.0 268.0 M609.8 276.0L623.5 271.5 M482.5 312.0L465.4 310.2 M605.5 310.1C609.5 311.8 624.2 317.3 629.4 320.2C634.6 323.1 635.6 326.4 636.9 327.7 M629.4 320.2L635.7 311.4 M628.5 344.0L634.0 333.0 M556.5 313.9L559.5 327.7 M608.0 355.3L611.8 349.0 M618.1 385.5L640.7 375.4 M644.5 372.9L650.8 384.2 M549.0 350.3L555.0 343.0 M535.2 325.2L533.0 312.6 M412.7 308.9L424.0 303.9 M415.2 326.5L430.3 322.7 M427.7 346.6L452.9 342.8 M445.3 375.5L455.4 368.0 M475.5 307.6L481.8 306.4 M499.3 303.9L513.2 300.1 M479.3 334.0L489.3 349.1 M534.5 326.5L553.4 332.8 M422.8 276.7C422.2 277.3 420.5 277.3 419.0 280.4C417.5 283.5 415.0 291.4 414.0 295.5C413.0 299.6 413.0 303.4 412.8 305.0 M427.9 279.2C427.0 281.9 423.9 291.2 422.8 295.5C421.8 299.8 421.8 303.4 421.6 305.0 M453.0 252.8C453.2 255.3 453.7 264.1 454.3 267.9C454.9 271.7 455.5 273.3 456.8 275.4C458.1 277.5 461.1 279.6 462.0 280.5 M488.2 289.2L490.0 298.0 M498.2 255.3L505.8 249.0 M530.9 249.0L533.4 253.3 M533.0 266.0L531.5 270.5 M594.2 277.9L581.0 279.2 M575.4 255.3L574.0 260.8 M623.0 232.7L620.6 227.7 M659.5 262.0L670.5 259.0 M645.7 235.2L643.2 226.4 M545.2 215.1L544.0 206.0 M570.0 207.6L569.0 199.8 M502.5 223.0L501.5 218.8 M521.0 221.5L520.0 217.0 M462.0 382.0L473.0 372.0 M480.0 399.0L489.0 388.0 M507.0 409.0L511.0 399.5 M560.0 405.5L562.0 420.5 M622.0 391.0L626.0 401.5 M655.0 345.0L671.5 339.0 M657.0 330.0L673.0 322.0 M660.8 290.0L674.0 284.0 M398.0 268.0L404.0 264.5 M404.5 296.0L413.0 292.0" fill="none" stroke="#fcd6fa" stroke-width="1.7" stroke-dasharray="1.3 11.5 1.2 17 1.5 8.5" opacity="0.7"/>
<path d="M410.5 229.9L417.6 229.2Q421.6 228.9 422.9 232.7L429.1 251.5Q430.4 255.3 426.8 257.0L420.2 259.9Q416.6 261.6 415.4 257.8L407.7 234.0Q406.5 230.2 410.5 229.9Z" fill="none" stroke="#3e3e3e" stroke-width="1" opacity="0.8"/>
<path d="M410.5 229.9L417.6 229.2Q421.6 228.9 422.9 232.7L429.1 251.5Q430.4 255.3 426.8 257.0L420.2 259.9Q416.6 261.6 415.4 257.8L407.7 234.0Q406.5 230.2 410.5 229.9Z" fill="none" stroke="#d84ad0" stroke-width="0.9" stroke-dasharray="5 7" opacity="0.7"/>
<path d="M615.7 173.2L620.5 172.3Q624.4 171.5 625.9 175.2L634.2 196.7Q635.7 200.4 632.0 201.9L626.8 203.9Q623.1 205.4 621.7 201.6L613.2 177.8Q611.8 174.0 615.7 173.2Z" fill="none" stroke="#3e3e3e" stroke-width="1" opacity="0.8"/>
<path d="M615.7 173.2L620.5 172.3Q624.4 171.5 625.9 175.2L634.2 196.7Q635.7 200.4 632.0 201.9L626.8 203.9Q623.1 205.4 621.7 201.6L613.2 177.8Q611.8 174.0 615.7 173.2Z" fill="none" stroke="#d84ad0" stroke-width="0.9" stroke-dasharray="5 7" opacity="0.7"/>
<path d="M657.2 186.8C657.8 189.3 659.3 194.3 661.0 201.8C662.6 209.3 665.2 221.5 667.2 231.7C669.3 242.0 671.4 253.3 673.3 263.2C675.2 273.0 677.2 282.2 678.5 290.9C679.7 299.6 680.4 307.1 680.7 315.2C681.0 323.3 680.5 333.8 680.1 339.5C679.7 345.2 679.3 345.4 678.2 349.4C677.0 353.5 675.6 359.3 673.1 363.7C670.7 368.0 667.8 371.8 663.3 375.5C658.9 379.2 653.0 382.6 646.6 385.9C640.1 389.3 632.0 392.6 624.6 395.7C617.3 398.8 609.9 402.0 602.6 404.6C595.3 407.1 588.2 409.3 580.9 411.1C573.6 412.9 565.0 414.4 558.9 415.5C552.8 416.6 550.0 417.0 544.5 417.5C539.0 418.0 533.0 418.8 525.9 418.4C518.8 418.0 509.1 416.9 502.1 414.9C495.0 413.0 489.4 410.3 483.5 406.8C477.7 403.3 472.6 399.2 467.1 393.9C461.5 388.5 455.4 381.4 450.1 374.5C444.8 367.5 440.2 359.6 435.3 352.1C430.4 344.7 425.6 337.9 420.6 329.6C415.7 321.3 409.4 309.1 405.7 302.1C401.9 295.2 400.4 291.8 398.3 287.7C396.3 283.6 394.9 281.1 393.3 277.4C391.6 273.7 389.2 267.5 388.4 265.5 M654.2 187.6C654.8 190.1 656.3 195.0 657.9 202.4C659.6 209.9 662.1 222.1 664.2 232.4C666.2 242.6 668.4 253.9 670.3 263.8C672.1 273.6 674.2 282.7 675.4 291.3C676.6 299.9 677.3 307.3 677.6 315.3C677.9 323.3 677.4 333.7 677.0 339.3C676.6 344.8 676.3 344.8 675.2 348.6C674.1 352.4 672.8 358.0 670.5 362.1C668.1 366.2 665.5 369.6 661.3 373.1C657.1 376.6 651.4 379.9 645.1 383.2C638.8 386.5 630.7 389.8 623.4 392.8C616.2 395.9 608.8 399.1 601.6 401.6C594.4 404.2 587.3 406.3 580.1 408.1C572.9 409.9 564.4 411.4 558.4 412.4C552.4 413.5 549.6 414.0 544.2 414.4C538.8 414.9 533.0 415.7 526.1 415.3C519.2 414.9 509.7 413.8 502.9 411.9C496.1 410.1 490.7 407.5 485.1 404.1C479.5 400.8 474.6 396.9 469.2 391.6C463.8 386.4 457.8 379.5 452.6 372.6C447.3 365.7 442.7 357.9 437.9 350.4C433.0 343.0 428.2 336.3 423.3 328.0C418.4 319.7 412.1 307.6 408.4 300.7C404.7 293.7 403.2 290.4 401.1 286.3C399.0 282.2 397.7 279.8 396.1 276.2C394.5 272.5 392.1 266.3 391.3 264.4 M634.0 236.0L624.5 252.5" fill="none" stroke="#dc48d3" stroke-width="1.4" opacity="0.92"/>
<path d="M657.2 186.8C657.8 189.3 659.3 194.3 661.0 201.8C662.6 209.3 665.2 221.5 667.2 231.7C669.3 242.0 671.4 253.3 673.3 263.2C675.2 273.0 677.2 282.2 678.5 290.9C679.7 299.6 680.4 307.1 680.7 315.2C681.0 323.3 680.5 333.8 680.1 339.5C679.7 345.2 679.3 345.4 678.2 349.4C677.0 353.5 675.6 359.3 673.1 363.7C670.7 368.0 667.8 371.8 663.3 375.5C658.9 379.2 653.0 382.6 646.6 385.9C640.1 389.3 632.0 392.6 624.6 395.7C617.3 398.8 609.9 402.0 602.6 404.6C595.3 407.1 588.2 409.3 580.9 411.1C573.6 412.9 565.0 414.4 558.9 415.5C552.8 416.6 550.0 417.0 544.5 417.5C539.0 418.0 533.0 418.8 525.9 418.4C518.8 418.0 509.1 416.9 502.1 414.9C495.0 413.0 489.4 410.3 483.5 406.8C477.7 403.3 472.6 399.2 467.1 393.9C461.5 388.5 455.4 381.4 450.1 374.5C444.8 367.5 440.2 359.6 435.3 352.1C430.4 344.7 425.6 337.9 420.6 329.6C415.7 321.3 409.4 309.1 405.7 302.1C401.9 295.2 400.4 291.8 398.3 287.7C396.3 283.6 394.9 281.1 393.3 277.4C391.6 273.7 389.2 267.5 388.4 265.5 M654.2 187.6C654.8 190.1 656.3 195.0 657.9 202.4C659.6 209.9 662.1 222.1 664.2 232.4C666.2 242.6 668.4 253.9 670.3 263.8C672.1 273.6 674.2 282.7 675.4 291.3C676.6 299.9 677.3 307.3 677.6 315.3C677.9 323.3 677.4 333.7 677.0 339.3C676.6 344.8 676.3 344.8 675.2 348.6C674.1 352.4 672.8 358.0 670.5 362.1C668.1 366.2 665.5 369.6 661.3 373.1C657.1 376.6 651.4 379.9 645.1 383.2C638.8 386.5 630.7 389.8 623.4 392.8C616.2 395.9 608.8 399.1 601.6 401.6C594.4 404.2 587.3 406.3 580.1 408.1C572.9 409.9 564.4 411.4 558.4 412.4C552.4 413.5 549.6 414.0 544.2 414.4C538.8 414.9 533.0 415.7 526.1 415.3C519.2 414.9 509.7 413.8 502.9 411.9C496.1 410.1 490.7 407.5 485.1 404.1C479.5 400.8 474.6 396.9 469.2 391.6C463.8 386.4 457.8 379.5 452.6 372.6C447.3 365.7 442.7 357.9 437.9 350.4C433.0 343.0 428.2 336.3 423.3 328.0C418.4 319.7 412.1 307.6 408.4 300.7C404.7 293.7 403.2 290.4 401.1 286.3C399.0 282.2 397.7 279.8 396.1 276.2C394.5 272.5 392.1 266.3 391.3 264.4 M634.0 236.0L624.5 252.5" fill="none" stroke="#f7c8f3" stroke-width="1.1" stroke-dasharray="0.9 9.4 1 14" opacity="0.6"/>
<path d="M572.0 385.0L596.5 379.0A2.3 2.3 0 0 0 595.5 374.6L571.0 380.6A2.3 2.3 0 0 0 572.0 385.0Z" fill="none" stroke="#ea50e2" stroke-width="1.3"/>
<path d="M579.0 376.3C579.7 375.2 581.2 373.9 582.5 373.6C583.8 373.3 586.0 373.7 587.0 374.3C588.0 374.9 588.5 376.1 588.6 377.4C588.7 378.7 588.4 380.8 587.5 382.0C586.6 383.2 584.3 384.4 583.0 384.6C581.7 384.8 580.4 384.1 579.6 383.3C578.8 382.5 578.5 381.2 578.4 380.0C578.3 378.8 578.3 377.4 579.0 376.3Z" fill="none" stroke="#ea50e2" stroke-width="1.3"/>
<circle cx="580" cy="375.2" r="1.15" fill="#fbd8f8" opacity="0.9"/>
<circle cx="583" cy="374" r="1.15" fill="#fbd8f8" opacity="0.9"/>
<circle cx="586" cy="374.4" r="1.15" fill="#fbd8f8" opacity="0.9"/>
<circle cx="581" cy="384" r="1.15" fill="#fbd8f8" opacity="0.9"/>
<circle cx="584" cy="384.4" r="1.15" fill="#fbd8f8" opacity="0.9"/>
<circle cx="586.8" cy="383" r="1.15" fill="#fbd8f8" opacity="0.9"/>
<circle cx="572.3" cy="382.6" r="1.15" fill="#fbd8f8" opacity="0.9"/>
<circle cx="575.5" cy="381.8" r="1.15" fill="#fbd8f8" opacity="0.9"/>
<circle cx="592" cy="377.6" r="1.15" fill="#fbd8f8" opacity="0.9"/>
<circle cx="595.4" cy="377" r="1.15" fill="#fbd8f8" opacity="0.9"/>
<circle cx="583" cy="378" r="1.15" fill="#fbd8f8" opacity="0.9"/>
<circle cx="584" cy="380.6" r="1.15" fill="#fbd8f8" opacity="0.9"/>
</g>
<path d="M647.5 134.0C648.2 135.2 650.2 135.9 652.0 141.5C653.8 147.1 656.4 160.4 658.3 167.7C660.2 175.0 661.8 179.9 663.3 185.3C664.8 190.8 665.4 192.9 667.1 200.4C668.8 207.9 671.3 220.2 673.4 230.5C675.5 240.8 677.6 252.1 679.5 262.0C681.4 271.9 683.5 281.2 684.7 290.0C686.0 298.8 686.7 306.7 687.0 315.0C687.3 323.3 686.9 334.0 686.4 340.0C685.9 346.0 685.5 346.7 684.2 351.2C682.9 355.7 681.4 361.9 678.6 366.8C675.8 371.7 672.2 376.2 667.4 380.3C662.5 384.4 656.2 388.0 649.5 391.5C642.8 395.0 634.6 398.3 627.1 401.5C619.6 404.7 612.2 407.9 604.7 410.5C597.2 413.1 589.9 415.3 582.4 417.2C574.9 419.1 566.2 420.6 560.0 421.7C553.8 422.8 550.8 423.3 545.0 423.8C539.2 424.3 532.9 425.2 525.5 424.7C518.1 424.2 507.9 423.1 500.4 421.0C492.9 418.9 486.6 416.0 480.3 412.2C474.0 408.4 468.6 404.0 462.7 398.4C456.8 392.8 450.6 385.4 445.1 378.3C439.7 371.2 435.0 363.2 430.0 355.6C425.0 348.0 420.2 341.2 415.2 332.8C410.2 324.4 403.9 312.2 400.1 305.1C396.4 298.1 394.8 294.7 392.7 290.5C390.6 286.3 389.2 283.8 387.5 280.0C385.8 276.2 384.2 272.1 382.6 267.9C381.0 263.7 379.3 258.6 377.8 254.8C376.3 251.0 374.9 248.7 373.8 245.3C372.7 241.9 372.5 239.8 371.0 234.2C369.5 228.6 366.0 215.7 365.0 212.0" fill="none" stroke="#4fd62c" stroke-width="1.0"/>
<path d="M644.2 136.0C644.9 137.1 646.7 137.2 648.4 142.7C650.1 148.1 652.7 161.4 654.6 168.6C656.5 175.9 658.2 180.9 659.6 186.3C661.1 191.7 661.7 193.7 663.4 201.2C665.1 208.7 667.6 221.0 669.7 231.2C671.7 241.5 673.9 252.8 675.8 262.7C677.6 272.6 679.7 281.8 680.9 290.5C682.2 299.3 682.9 306.9 683.2 315.1C683.5 323.3 683.1 333.9 682.6 339.7C682.2 345.5 681.8 345.9 680.6 350.1C679.3 354.3 677.9 360.4 675.3 364.9C672.7 369.4 669.5 373.5 664.9 377.4C660.3 381.3 654.3 384.7 647.7 388.1C641.2 391.6 633.0 394.9 625.6 398.0C618.2 401.1 610.8 404.3 603.4 406.9C596.1 409.5 588.8 411.7 581.5 413.5C574.1 415.4 565.5 416.9 559.3 418.0C553.2 419.0 550.3 419.5 544.7 420.0C539.1 420.5 532.9 421.4 525.7 420.9C518.5 420.5 508.7 419.3 501.4 417.3C494.2 415.3 488.3 412.6 482.3 408.9C476.2 405.3 471.0 401.2 465.3 395.7C459.6 390.2 453.5 383.0 448.1 376.0C442.8 369.0 438.1 361.0 433.2 353.5C428.2 346.0 423.4 339.2 418.5 330.9C413.5 322.5 407.2 310.3 403.5 303.3C399.7 296.3 398.2 292.9 396.1 288.8C394.0 284.7 392.6 282.2 391.0 278.4C389.3 274.7 387.8 270.7 386.1 266.5C384.5 262.4 382.8 257.2 381.3 253.4C379.9 249.7 378.5 247.5 377.4 244.1C376.3 240.7 376.1 238.7 374.7 233.2C373.2 227.7 369.7 214.7 368.7 211.0" fill="none" stroke="#e0402a" stroke-width="0.8" stroke-dasharray="2.2 1.6" opacity="0.8"/>
<path d="M646.4 134.7C647.1 135.9 649.0 136.3 650.8 141.9C652.5 147.5 655.2 160.7 657.0 168.0C658.9 175.3 660.6 180.2 662.0 185.6C663.5 191.1 664.2 193.2 665.8 200.7C667.5 208.2 670.1 220.5 672.1 230.8C674.2 241.0 676.3 252.3 678.2 262.2C680.1 272.1 682.2 281.4 683.4 290.2C684.7 299.0 685.4 306.8 685.7 315.0C686.0 323.3 685.6 333.9 685.1 339.9C684.6 345.9 684.2 346.5 683.0 350.8C681.7 355.2 680.2 361.4 677.5 366.2C674.7 370.9 671.3 375.3 666.6 379.3C661.8 383.3 655.6 386.9 648.9 390.3C642.2 393.8 634.0 397.1 626.6 400.3C619.2 403.5 611.7 406.7 604.3 409.3C596.9 411.9 589.5 414.1 582.1 415.9C574.7 417.8 566.0 419.3 559.8 420.4C553.6 421.5 550.6 422.0 544.9 422.5C539.2 423.0 532.9 423.9 525.6 423.4C518.2 422.9 508.2 421.8 500.7 419.7C493.3 417.7 487.2 414.8 481.0 411.1C474.8 407.4 469.4 403.1 463.6 397.5C457.8 391.9 451.6 384.6 446.1 377.5C440.7 370.4 436.1 362.4 431.1 354.9C426.1 347.3 421.3 340.5 416.3 332.1C411.3 323.7 405.0 311.5 401.2 304.5C397.5 297.5 396.0 294.1 393.9 289.9C391.8 285.7 390.4 283.2 388.7 279.5C387.0 275.7 385.4 271.6 383.8 267.4C382.2 263.2 380.5 258.1 379.0 254.3C377.5 250.6 376.2 248.3 375.0 244.9C373.9 241.5 373.7 239.4 372.3 233.9C370.8 228.3 367.3 215.4 366.3 211.7" fill="none" stroke="#e23ad8" stroke-width="1.5"/>
<path d="M365.0 212.0C368.5 212.1 378.8 212.4 386.0 212.4C393.2 212.4 399.3 212.3 408.0 212.0C416.7 211.7 428.0 211.2 438.0 210.4C448.0 209.6 458.3 208.5 468.0 207.0C477.7 205.5 488.5 203.2 496.0 201.6C503.5 200.0 506.8 199.4 513.0 197.7C519.2 196.0 526.8 193.6 533.0 191.3C539.2 189.0 544.5 186.1 550.0 183.7C555.5 181.3 560.3 179.3 566.0 177.0C571.7 174.7 576.6 173.4 584.0 170.0C591.4 166.6 602.8 160.6 610.6 156.4C618.4 152.2 624.6 148.7 630.7 145.0C636.9 141.3 644.7 135.8 647.5 134.0" fill="none" stroke="#e34fdc" stroke-width="1.5"/>
<path d="M365.0 212.0C368.5 212.1 378.8 212.4 386.0 212.4C393.2 212.4 399.3 212.3 408.0 212.0C416.7 211.7 428.0 211.2 438.0 210.4C448.0 209.6 458.3 208.5 468.0 207.0C477.7 205.5 488.5 203.2 496.0 201.6C503.5 200.0 506.8 199.4 513.0 197.7C519.2 196.0 526.8 193.6 533.0 191.3C539.2 189.0 544.5 186.1 550.0 183.7C555.5 181.3 560.3 179.3 566.0 177.0C571.7 174.7 576.6 173.4 584.0 170.0C591.4 166.6 602.8 160.6 610.6 156.4C618.4 152.2 624.6 148.7 630.7 145.0C636.9 141.3 644.7 135.8 647.5 134.0" fill="none" stroke="#f5b4f1" stroke-width="1.5" stroke-dasharray="0.9 2.4" opacity="0.8"/>
<path d="M372 214.6L386 214.9L408 214.5L438 212.9L468 209.5L496 204.2" fill="none" stroke="#e0402a" stroke-width="0.8" stroke-dasharray="2.4 2" opacity="0.8"/>
<path d="M556 184.6L566 180.2L584 173.2L606 162" fill="none" stroke="#e0402a" stroke-width="0.8" stroke-dasharray="2.4 2" opacity="0.7"/>
<circle cx="416.6" cy="241.5" r="1.1" fill="#fde8fb"/>
<circle cx="417.4" cy="244" r="1.1" fill="#fde8fb"/>
<circle cx="420.8" cy="251.5" r="1.1" fill="#fde8fb"/>
<circle cx="623.1" cy="186.6" r="1.1" fill="#fde8fb"/>
<circle cx="624" cy="189" r="1.1" fill="#fde8fb"/>
<circle cx="625.6" cy="195.4" r="1.1" fill="#fde8fb"/>
</g>
<path d="M764.5 85.5L757.6 62" stroke="#e02020" stroke-width="0.9"/><path d="M756.2 58L759.9 64.6L755.3 65.8Z" fill="#ff2a2a"/>
<path d="M765 85.5L787 80" stroke="#20d020" stroke-width="0.9"/><path d="M794 78.4L786.4 82.6L785.4 78Z" fill="#2aff2a"/>
<rect x="761.6" y="83" width="5.4" height="5.4" fill="#e8d21a" stroke="#a08c10" stroke-width="0.4"/>
<path d="M757.5 88.5l2.5-1.5M757.8 91l2.4-0.6" stroke="#20d8e8" stroke-width="0.8"/>
</svg>
<span class="t" style="left:753.60px;top:47.74px;font-size:5.6px;color:#ff2a2a;transform:scaleX(1.0000);font-family:'Liberation Mono',monospace;font-weight:bold;">X</span>
<span class="t" style="left:795.60px;top:70.34px;font-size:5.6px;color:#2aff2a;transform:scaleX(1.0000);font-family:'Liberation Mono',monospace;font-weight:bold;">Y</span>
</body></html>
